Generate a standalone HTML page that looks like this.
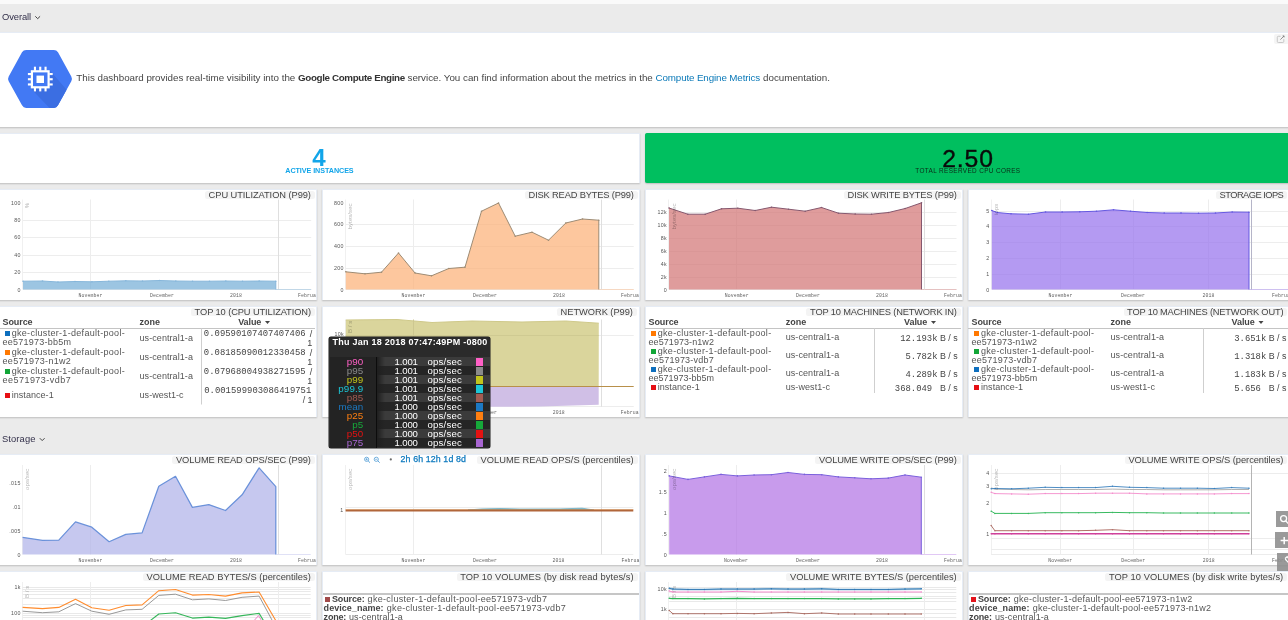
<!DOCTYPE html>
<html><head><meta charset="utf-8"><title>Google Compute Engine</title>
<style>
html,body{margin:0;padding:0;}
body{width:1288px;height:620px;overflow:hidden;background:#ebebeb;font-family:'Liberation Sans', sans-serif;position:relative;}
#root{position:absolute;left:0;top:0;width:1288px;height:620px;overflow:hidden;}
.p{position:absolute;background:#fff;border:1px solid #e6ecf5;border-bottom:0;box-shadow:0 1px 1.5px rgba(0,0,0,.19);box-sizing:border-box;}
svg{position:absolute;left:0;top:0;will-change:transform;}
.tl{position:absolute;left:0;top:0;width:1288px;height:620px;will-change:transform;}
</style></head><body><div id="root">
<div style="position:absolute;left:0px;top:0px;width:1288px;height:4px;background:#fafafa;"></div>
<div class="p" style="left:-2px;top:32px;width:1298px;height:95px;background:#fff;"></div>
<div style="position:absolute;left:1274px;top:34px;width:14px;height:10px;background:#f5f5f5;border-radius:2px 0 0 2px;"></div>
<div class="p" style="left:-2px;top:133px;width:642px;height:50px;background:#fff;"></div>
<div class="p" style="left:645px;top:133px;width:651px;height:50px;background:#00bf5f;border-color:#00bf5f;border-radius:2px;"></div>
<div class="p" style="left:-2px;top:189px;width:319px;height:111px;background:#fff;"></div>
<div class="p" style="left:322px;top:189px;width:318px;height:111px;background:#fff;"></div>
<div class="p" style="left:645px;top:189px;width:318px;height:111px;background:#fff;"></div>
<div class="p" style="left:968px;top:189px;width:328px;height:111px;background:#fff;"></div>
<div style="position:absolute;left:205px;top:191px;width:110px;height:8px;background:#f4f4f4;border-radius:2.5px;"></div>
<div style="position:absolute;left:525px;top:191px;width:113px;height:8px;background:#f4f4f4;border-radius:2.5px;"></div>
<div style="position:absolute;left:844px;top:191px;width:117px;height:8px;background:#f4f4f4;border-radius:2.5px;"></div>
<div style="position:absolute;left:1216px;top:191px;width:71px;height:8px;background:#f4f4f4;border-radius:2.5px;"></div>
<div class="p" style="left:-2px;top:306px;width:319px;height:111px;background:#fff;"></div>
<div class="p" style="left:322px;top:306px;width:318px;height:111px;background:#fff;"></div>
<div class="p" style="left:645px;top:306px;width:318px;height:111px;background:#fff;"></div>
<div class="p" style="left:968px;top:306px;width:328px;height:111px;background:#fff;"></div>
<div style="position:absolute;left:191px;top:308px;width:124px;height:8px;background:#f4f4f4;border-radius:2.5px;"></div>
<div style="position:absolute;left:557px;top:308px;width:80px;height:8px;background:#f4f4f4;border-radius:2.5px;"></div>
<div style="position:absolute;left:806px;top:308px;width:155px;height:8px;background:#f4f4f4;border-radius:2.5px;"></div>
<div style="position:absolute;left:1124px;top:308px;width:163px;height:8px;background:#f4f4f4;border-radius:2.5px;"></div>
<div style="position:absolute;left:5px;top:331px;width:5px;height:5px;background:#0e6fbe;"></div>
<div style="position:absolute;left:5px;top:350px;width:5px;height:5px;background:#ff7800;"></div>
<div style="position:absolute;left:5px;top:369px;width:5px;height:5px;background:#12a637;"></div>
<div style="position:absolute;left:5px;top:393px;width:5px;height:5px;background:#e60f14;"></div>
<div style="position:absolute;left:651px;top:331px;width:5px;height:5px;background:#ff7800;"></div>
<div style="position:absolute;left:651px;top:349px;width:5px;height:5px;background:#12a637;"></div>
<div style="position:absolute;left:651px;top:367px;width:5px;height:5px;background:#0e6fbe;"></div>
<div style="position:absolute;left:651px;top:385px;width:5px;height:5px;background:#e60f14;"></div>
<div style="position:absolute;left:974px;top:331px;width:5px;height:5px;background:#ff7800;"></div>
<div style="position:absolute;left:974px;top:349px;width:5px;height:5px;background:#12a637;"></div>
<div style="position:absolute;left:974px;top:367px;width:5px;height:5px;background:#0e6fbe;"></div>
<div style="position:absolute;left:974px;top:385px;width:5px;height:5px;background:#e60f14;"></div>
<div class="p" style="left:-2px;top:454px;width:319px;height:111px;background:#fff;"></div>
<div class="p" style="left:322px;top:454px;width:318px;height:111px;background:#fff;"></div>
<div class="p" style="left:645px;top:454px;width:318px;height:111px;background:#fff;"></div>
<div class="p" style="left:968px;top:454px;width:328px;height:111px;background:#fff;"></div>
<div style="position:absolute;left:172px;top:456px;width:143px;height:8px;background:#f4f4f4;border-radius:2.5px;"></div>
<div style="position:absolute;left:477px;top:456px;width:161px;height:8px;background:#f4f4f4;border-radius:2.5px;"></div>
<div style="position:absolute;left:815px;top:456px;width:146px;height:8px;background:#f4f4f4;border-radius:2.5px;"></div>
<div style="position:absolute;left:1125px;top:456px;width:162px;height:8px;background:#f4f4f4;border-radius:2.5px;"></div>
<div class="p" style="left:-2px;top:571px;width:319px;height:69px;background:#fff;"></div>
<div class="p" style="left:322px;top:571px;width:318px;height:69px;background:#fff;"></div>
<div class="p" style="left:645px;top:571px;width:318px;height:69px;background:#fff;"></div>
<div class="p" style="left:968px;top:571px;width:328px;height:69px;background:#fff;"></div>
<div style="position:absolute;left:143px;top:573px;width:172px;height:8px;background:#f4f4f4;border-radius:2.5px;"></div>
<div style="position:absolute;left:457px;top:573px;width:181px;height:8px;background:#f4f4f4;border-radius:2.5px;"></div>
<div style="position:absolute;left:786px;top:573px;width:175px;height:8px;background:#f4f4f4;border-radius:2.5px;"></div>
<div style="position:absolute;left:1105px;top:573px;width:182px;height:8px;background:#f4f4f4;border-radius:2.5px;"></div>
<div style="position:absolute;left:323px;top:593px;width:316px;height:2px;background:#c6c6c6;"></div>
<div style="position:absolute;left:325px;top:597px;width:5px;height:5px;background:#a24a4a;"></div>
<div style="position:absolute;left:969px;top:593px;width:326px;height:2px;background:#c6c6c6;"></div>
<div style="position:absolute;left:971px;top:597px;width:5px;height:5px;background:#e3141c;"></div>
<svg width="1288" height="620" viewBox="0 0 1288 620" shape-rendering="auto">
<path d="M35.3 16.3 l2.4 2.4 l2.4 -2.4" fill="none" stroke="#444" stroke-width="1"/>
<path d="M39.8 438.2 l2.4 2.4 l2.4 -2.4" fill="none" stroke="#444" stroke-width="1"/>
<path d="M1280.6 36.3 h-2.3 a1 1 0 0 0 -1 1 v4.2 a1 1 0 0 0 1 1 h4.5 a1 1 0 0 0 1 -1 v-2.4" fill="none" stroke="#bdbdbd" stroke-width="0.8"/><path d="M1280.4 39.6 L1284 36 M1282.6 35.9 h1.5 v1.5" fill="none" stroke="#707070" stroke-width="0.75"/>
<g>
<path d="M26.2 49.9 H53.8 Q56.6 49.9 58 52.3 L71.3 76.4 Q72.6 78.8 71.3 81.2 L58 105.3 Q56.6 107.9 53.8 107.9 H26.2 Q23.4 107.9 22 105.3 L8.7 81.2 Q7.4 78.8 8.7 76.4 L22 52.3 Q23.4 49.9 26.2 49.9 Z" fill="#4279f4"/>
<path d="M49.7 70.2 L66.6 89.7 L58 105.3 Q56.6 107.9 53.8 107.9 H49.6 L30.8 88.4 Z" fill="#3b6ee2"/>
<g fill="#fff">
<rect x="30.8" y="70.2" width="18.9" height="18.2"/>
<rect x="33.9" y="66.7" width="2.1" height="4"/><rect x="39.2" y="66.7" width="2.1" height="4"/><rect x="44.5" y="66.7" width="2.1" height="4"/>
<rect x="33.9" y="88" width="2.1" height="3.4"/><rect x="39.2" y="88" width="2.1" height="3.4"/><rect x="44.5" y="88" width="2.1" height="3.4"/>
<rect x="27.9" y="73" width="3.4" height="2.1"/><rect x="27.9" y="78.2" width="3.4" height="2.1"/><rect x="27.9" y="83.4" width="3.4" height="2.1"/>
<rect x="49.3" y="73" width="3.4" height="2.1"/><rect x="49.3" y="78.2" width="3.4" height="2.1"/><rect x="49.3" y="83.4" width="3.4" height="2.1"/>
</g>
<rect x="33" y="72.4" width="14.5" height="13.8" fill="#4279f4"/>
<rect x="36.5" y="75.6" width="7.5" height="7.4" fill="#fff"/>
</g>
<line x1="22.5" x2="22.5" y1="199.5" y2="289.5" stroke="#f0f0f0" stroke-width="1"/>
<line x1="23" x2="311.2" y1="220.5" y2="220.5" stroke="#ededed" stroke-width="1"/>
<line x1="23" x2="311.2" y1="237.5" y2="237.5" stroke="#ededed" stroke-width="1"/>
<line x1="23" x2="311.2" y1="255.5" y2="255.5" stroke="#ededed" stroke-width="1"/>
<line x1="23" x2="311.2" y1="272.5" y2="272.5" stroke="#ededed" stroke-width="1"/>
<line x1="23" x2="311.2" y1="289.5" y2="289.5" stroke="#ededed" stroke-width="1"/>
<line x1="90.5" x2="90.5" y1="199.5" y2="289.5" stroke="#ededed" stroke-width="1"/>
<line x1="278.5" x2="278.5" y1="199.5" y2="289.5" stroke="#dfdfdf" stroke-width="1"/>
<path d="M23.0 281.2 L42.5 281.0 L58.0 282.0 L75.0 281.5 L92.0 281.8 L108.8 281.2 L125.8 280.8 L142.5 281.0 L159.5 280.5 L175.8 281.0 L192.5 281.2 L209.5 281.2 L225.8 281.0 L242.5 281.2 L259.2 281.0 L275.8 281.2 L275.8 289.5 L23.0 289.5 Z" fill="rgba(118,174,215,0.72)"/>
<path d="M23.0 281.2 L42.5 281.0 L58.0 282.0 L75.0 281.5 L92.0 281.8 L108.8 281.2 L125.8 280.8 L142.5 281.0 L159.5 280.5 L175.8 281.0 L192.5 281.2 L209.5 281.2 L225.8 281.0 L242.5 281.2 L259.2 281.0 L275.8 281.2 L275.8 289.5" fill="none" stroke="#86b6da" stroke-width="1" stroke-linejoin="round"/>
<path d="M275.8 289.5 H311.2" fill="none" stroke="rgba(156,197,226,1.0)" stroke-width="1" opacity="0.55"/>
<circle cx="23.0" cy="281.2" r="0.8" fill="#86b6da"/>
<circle cx="42.5" cy="281.0" r="0.8" fill="#86b6da"/>
<circle cx="58.0" cy="282.0" r="0.8" fill="#86b6da"/>
<circle cx="75.0" cy="281.5" r="0.8" fill="#86b6da"/>
<circle cx="92.0" cy="281.8" r="0.8" fill="#86b6da"/>
<circle cx="108.8" cy="281.2" r="0.8" fill="#86b6da"/>
<circle cx="125.8" cy="280.8" r="0.8" fill="#86b6da"/>
<circle cx="142.5" cy="281.0" r="0.8" fill="#86b6da"/>
<circle cx="159.5" cy="280.5" r="0.8" fill="#86b6da"/>
<circle cx="175.8" cy="281.0" r="0.8" fill="#86b6da"/>
<circle cx="192.5" cy="281.2" r="0.8" fill="#86b6da"/>
<circle cx="209.5" cy="281.2" r="0.8" fill="#86b6da"/>
<circle cx="225.8" cy="281.0" r="0.8" fill="#86b6da"/>
<circle cx="242.5" cy="281.2" r="0.8" fill="#86b6da"/>
<circle cx="259.2" cy="281.0" r="0.8" fill="#86b6da"/>
<circle cx="275.8" cy="281.2" r="0.8" fill="#86b6da"/>
<text transform="translate(29 208.3) rotate(-90)" font-family="Liberation Sans, sans-serif" font-size="6.2" fill="#000" opacity="0.3">%</text>
<line x1="345.5" x2="345.5" y1="199.5" y2="289.5" stroke="#f0f0f0" stroke-width="1"/>
<line x1="345.7" x2="633.7" y1="224.5" y2="224.5" stroke="#ededed" stroke-width="1"/>
<line x1="345.7" x2="633.7" y1="246.5" y2="246.5" stroke="#ededed" stroke-width="1"/>
<line x1="345.7" x2="633.7" y1="268.5" y2="268.5" stroke="#ededed" stroke-width="1"/>
<line x1="345.7" x2="633.7" y1="289.5" y2="289.5" stroke="#ededed" stroke-width="1"/>
<line x1="413.5" x2="413.5" y1="199.5" y2="289.5" stroke="#ededed" stroke-width="1"/>
<path d="M345.8 271.8 L365.0 273.8 L381.5 272.2 L398.5 253.0 L415.0 273.0 L431.5 275.8 L448.8 268.5 L465.0 267.2 L481.5 211.2 L498.5 203.0 L515.2 236.2 L532.0 232.2 L548.5 240.2 L565.8 223.0 L582.5 219.0 L598.8 220.2 L598.8 289.5 L345.8 289.5 Z" fill="rgba(252,177,120,0.72)"/>
<path d="M345.8 271.8 L365.0 273.8 L381.5 272.2 L398.5 253.0 L415.0 273.0 L431.5 275.8 L448.8 268.5 L465.0 267.2 L481.5 211.2 L498.5 203.0 L515.2 236.2 L532.0 232.2 L548.5 240.2 L565.8 223.0 L582.5 219.0 L598.8 220.2 L598.8 289.5" fill="none" stroke="#9d8b74" stroke-width="1" stroke-linejoin="round"/>
<path d="M598.8 289.5 H633.7" fill="none" stroke="rgba(253,199,158,1.0)" stroke-width="1" opacity="0.55"/>
<circle cx="345.8" cy="271.8" r="0.8" fill="#9d8b74"/>
<circle cx="365.0" cy="273.8" r="0.8" fill="#9d8b74"/>
<circle cx="381.5" cy="272.2" r="0.8" fill="#9d8b74"/>
<circle cx="398.5" cy="253.0" r="0.8" fill="#9d8b74"/>
<circle cx="415.0" cy="273.0" r="0.8" fill="#9d8b74"/>
<circle cx="431.5" cy="275.8" r="0.8" fill="#9d8b74"/>
<circle cx="448.8" cy="268.5" r="0.8" fill="#9d8b74"/>
<circle cx="465.0" cy="267.2" r="0.8" fill="#9d8b74"/>
<circle cx="481.5" cy="211.2" r="0.8" fill="#9d8b74"/>
<circle cx="498.5" cy="203.0" r="0.8" fill="#9d8b74"/>
<circle cx="515.2" cy="236.2" r="0.8" fill="#9d8b74"/>
<circle cx="532.0" cy="232.2" r="0.8" fill="#9d8b74"/>
<circle cx="548.5" cy="240.2" r="0.8" fill="#9d8b74"/>
<circle cx="565.8" cy="223.0" r="0.8" fill="#9d8b74"/>
<circle cx="582.5" cy="219.0" r="0.8" fill="#9d8b74"/>
<circle cx="598.8" cy="220.2" r="0.8" fill="#9d8b74"/>
<line x1="601.5" x2="601.5" y1="199.5" y2="289.5" stroke="#dfdfdf" stroke-width="1"/>
<text transform="translate(352 229.5) rotate(-90)" font-family="Liberation Sans, sans-serif" font-size="6.2" fill="#000" opacity="0.3">bytes/sec</text>
<line x1="668.5" x2="668.5" y1="199.5" y2="289.5" stroke="#f0f0f0" stroke-width="1"/>
<line x1="669" x2="956.5" y1="212.5" y2="212.5" stroke="#ededed" stroke-width="1"/>
<line x1="669" x2="956.5" y1="225.5" y2="225.5" stroke="#ededed" stroke-width="1"/>
<line x1="669" x2="956.5" y1="238.5" y2="238.5" stroke="#ededed" stroke-width="1"/>
<line x1="669" x2="956.5" y1="251.5" y2="251.5" stroke="#ededed" stroke-width="1"/>
<line x1="669" x2="956.5" y1="264.5" y2="264.5" stroke="#ededed" stroke-width="1"/>
<line x1="669" x2="956.5" y1="277.5" y2="277.5" stroke="#ededed" stroke-width="1"/>
<line x1="669" x2="956.5" y1="289.5" y2="289.5" stroke="#ededed" stroke-width="1"/>
<line x1="736.5" x2="736.5" y1="199.5" y2="289.5" stroke="#ededed" stroke-width="1"/>
<path d="M669.0 208.0 L687.8 214.2 L705.2 214.2 L721.5 208.8 L737.8 208.2 L755.2 210.5 L771.5 207.2 L788.5 209.2 L805.2 211.2 L821.5 207.5 L838.5 213.2 L855.2 214.0 L871.5 214.2 L888.5 212.5 L905.2 208.5 L921.5 202.8 L921.5 289.5 L669.0 289.5 Z" fill="rgba(211,118,118,0.72)"/>
<path d="M669.0 208.0 L687.8 214.2 L705.2 214.2 L721.5 208.8 L737.8 208.2 L755.2 210.5 L771.5 207.2 L788.5 209.2 L805.2 211.2 L821.5 207.5 L838.5 213.2 L855.2 214.0 L871.5 214.2 L888.5 212.5 L905.2 208.5 L921.5 202.8 L921.5 289.5" fill="none" stroke="#85586e" stroke-width="1" stroke-linejoin="round"/>
<path d="M921.5 289.5 H956.5" fill="none" stroke="rgba(223,156,156,1.0)" stroke-width="1" opacity="0.55"/>
<circle cx="669.0" cy="208.0" r="0.8" fill="#85586e"/>
<circle cx="687.8" cy="214.2" r="0.8" fill="#85586e"/>
<circle cx="705.2" cy="214.2" r="0.8" fill="#85586e"/>
<circle cx="721.5" cy="208.8" r="0.8" fill="#85586e"/>
<circle cx="737.8" cy="208.2" r="0.8" fill="#85586e"/>
<circle cx="755.2" cy="210.5" r="0.8" fill="#85586e"/>
<circle cx="771.5" cy="207.2" r="0.8" fill="#85586e"/>
<circle cx="788.5" cy="209.2" r="0.8" fill="#85586e"/>
<circle cx="805.2" cy="211.2" r="0.8" fill="#85586e"/>
<circle cx="821.5" cy="207.5" r="0.8" fill="#85586e"/>
<circle cx="838.5" cy="213.2" r="0.8" fill="#85586e"/>
<circle cx="855.2" cy="214.0" r="0.8" fill="#85586e"/>
<circle cx="871.5" cy="214.2" r="0.8" fill="#85586e"/>
<circle cx="888.5" cy="212.5" r="0.8" fill="#85586e"/>
<circle cx="905.2" cy="208.5" r="0.8" fill="#85586e"/>
<circle cx="921.5" cy="202.8" r="0.8" fill="#85586e"/>
<line x1="924.5" x2="924.5" y1="199.5" y2="289.5" stroke="#dfdfdf" stroke-width="1"/>
<text transform="translate(676 229.5) rotate(-90)" font-family="Liberation Sans, sans-serif" font-size="6.2" fill="#000" opacity="0.3">bytes/sec</text>
<line x1="991.5" x2="991.5" y1="199.5" y2="289.5" stroke="#f0f0f0" stroke-width="1"/>
<line x1="991.7" x2="1288" y1="211.5" y2="211.5" stroke="#ededed" stroke-width="1"/>
<line x1="991.7" x2="1288" y1="226.5" y2="226.5" stroke="#ededed" stroke-width="1"/>
<line x1="991.7" x2="1288" y1="242.5" y2="242.5" stroke="#ededed" stroke-width="1"/>
<line x1="991.7" x2="1288" y1="258.5" y2="258.5" stroke="#ededed" stroke-width="1"/>
<line x1="991.7" x2="1288" y1="274.5" y2="274.5" stroke="#ededed" stroke-width="1"/>
<line x1="991.7" x2="1288" y1="289.5" y2="289.5" stroke="#ededed" stroke-width="1"/>
<line x1="1060.5" x2="1060.5" y1="199.5" y2="289.5" stroke="#ededed" stroke-width="1"/>
<line x1="1133.5" x2="1133.5" y1="199.5" y2="289.5" stroke="#ededed" stroke-width="1"/>
<line x1="1208.5" x2="1208.5" y1="199.5" y2="289.5" stroke="#ededed" stroke-width="1"/>
<path d="M991.8 210.5 L997.2 212.5 L1011.0 213.8 L1028.5 214.2 L1045.5 212.0 L1062.2 212.0 L1079.8 211.8 L1096.5 211.2 L1113.5 209.8 L1130.5 211.2 L1147.2 212.5 L1164.2 213.0 L1181.0 213.0 L1198.5 213.2 L1215.5 213.0 L1232.2 212.0 L1249.0 212.2 L1249.0 289.5 L991.8 289.5 Z" fill="rgba(151,115,237,0.72)"/>
<path d="M991.8 210.5 L997.2 212.5 L1011.0 213.8 L1028.5 214.2 L1045.5 212.0 L1062.2 212.0 L1079.8 211.8 L1096.5 211.2 L1113.5 209.8 L1130.5 211.2 L1147.2 212.5 L1164.2 213.0 L1181.0 213.0 L1198.5 213.2 L1215.5 213.0 L1232.2 212.0 L1249.0 212.2 L1249.0 289.5" fill="none" stroke="#6558e0" stroke-width="1" stroke-linejoin="round"/>
<path d="M1249.0 289.5 H1288" fill="none" stroke="rgba(180,154,242,1.0)" stroke-width="1" opacity="0.55"/>
<circle cx="991.8" cy="210.5" r="0.8" fill="#6558e0"/>
<circle cx="997.2" cy="212.5" r="0.8" fill="#6558e0"/>
<circle cx="1011.0" cy="213.8" r="0.8" fill="#6558e0"/>
<circle cx="1028.5" cy="214.2" r="0.8" fill="#6558e0"/>
<circle cx="1045.5" cy="212.0" r="0.8" fill="#6558e0"/>
<circle cx="1062.2" cy="212.0" r="0.8" fill="#6558e0"/>
<circle cx="1079.8" cy="211.8" r="0.8" fill="#6558e0"/>
<circle cx="1096.5" cy="211.2" r="0.8" fill="#6558e0"/>
<circle cx="1113.5" cy="209.8" r="0.8" fill="#6558e0"/>
<circle cx="1130.5" cy="211.2" r="0.8" fill="#6558e0"/>
<circle cx="1147.2" cy="212.5" r="0.8" fill="#6558e0"/>
<circle cx="1164.2" cy="213.0" r="0.8" fill="#6558e0"/>
<circle cx="1181.0" cy="213.0" r="0.8" fill="#6558e0"/>
<circle cx="1198.5" cy="213.2" r="0.8" fill="#6558e0"/>
<circle cx="1215.5" cy="213.0" r="0.8" fill="#6558e0"/>
<circle cx="1232.2" cy="212.0" r="0.8" fill="#6558e0"/>
<circle cx="1249.0" cy="212.2" r="0.8" fill="#6558e0"/>
<line x1="1251.5" x2="1251.5" y1="199.5" y2="289.5" stroke="#b5b5c8" stroke-width="1"/>
<text transform="translate(998 215) rotate(-90)" font-family="Liberation Sans, sans-serif" font-size="6.2" fill="#000" opacity="0.3">iops</text>
<path d="M265 321 h5 l-2.5 3 z" fill="#444"/>
<line x1="-2" x2="315" y1="328.5" y2="328.5" stroke="#c4c4c4" stroke-width="1"/>
<line x1="201.5" x2="201.5" y1="328.3" y2="404.5" stroke="#cfcfcf" stroke-width="1"/>
<path d="M931 321 h5 l-2.5 3 z" fill="#444"/>
<line x1="645" x2="961" y1="328.5" y2="328.5" stroke="#c4c4c4" stroke-width="1"/>
<line x1="874.5" x2="874.5" y1="328.3" y2="393" stroke="#cfcfcf" stroke-width="1"/>
<path d="M1258.5 321 h5 l-2.5 3 z" fill="#444"/>
<line x1="968" x2="1294" y1="328.5" y2="328.5" stroke="#c4c4c4" stroke-width="1"/>
<line x1="1203.5" x2="1203.5" y1="328.3" y2="393" stroke="#cfcfcf" stroke-width="1"/>
<line x1="345.5" x2="345.5" y1="319.5" y2="406.7" stroke="#f0f0f0" stroke-width="1"/>
<line x1="345.7" x2="633.7" y1="335.5" y2="335.5" stroke="#ededed" stroke-width="1"/>
<line x1="345.7" x2="633.7" y1="406.5" y2="406.5" stroke="#ededed" stroke-width="1"/>
<path d="M345.8 320.0 L397.0 319.5 L432.0 322.5 L472.0 321.0 L522.0 322.0 L565.8 321.0 L598.8 323.2 L598.7 386.2 L345.7 386.2 Z" fill="#dad59c"/>
<path d="M345.8 320.0 L397.0 319.5 L432.0 322.5 L472.0 321.0 L522.0 322.0 L565.8 321.0 L598.8 323.2" fill="none" stroke="#cfc98a" stroke-width="1"/>
<path d="M345.7 386.2 H598.7 V404.8 L540 406.6 L345.7 406.8 Z" fill="#d0bfe6"/>
<line x1="345.7" x2="598.7" y1="335.5" y2="335.5" stroke="#cfca92" stroke-width="1"/>
<line x1="413.5" x2="413.5" y1="319.5" y2="406.5" stroke="#cdc790" stroke-width="1"/>
<line x1="601.5" x2="601.5" y1="319.5" y2="406.7" stroke="#dfdfdf" stroke-width="1"/>
<path d="M345.7 386.5 H633.7" fill="none" stroke="#b8904a" stroke-width="1"/>
<text transform="translate(351.5 333) rotate(-90)" font-family="Liberation Sans, sans-serif" font-size="6.2" fill="#000" opacity="0.3">B / s</text>
<line x1="22.5" x2="22.5" y1="465" y2="554.5" stroke="#f0f0f0" stroke-width="1"/>
<line x1="90.5" x2="90.5" y1="465" y2="554.5" stroke="#ededed" stroke-width="1"/>
<path d="M22.6 537.3 L42.5 540.4 L58.8 540.1 L75.5 521.9 L91.8 527.2 L109.1 541.7 L125.8 534.4 L142.1 532.9 L158.8 486.3 L175.5 476.3 L192.4 507.4 L208.8 504.6 L225.5 510.5 L242.1 494.8 L259.1 467.8 L275.8 486.6 L275.8 554.5 L22.6 554.5 Z" fill="rgba(176,179,233,0.72)"/>
<path d="M22.6 537.3 L42.5 540.4 L58.8 540.1 L75.5 521.9 L91.8 527.2 L109.1 541.7 L125.8 534.4 L142.1 532.9 L158.8 486.3 L175.5 476.3 L192.4 507.4 L208.8 504.6 L225.5 510.5 L242.1 494.8 L259.1 467.8 L275.8 486.6 L275.8 554.5" fill="none" stroke="#6b92da" stroke-width="1.25" stroke-linejoin="round"/>
<path d="M275.8 554.5 H310.7" fill="none" stroke="rgba(198,200,239,1.0)" stroke-width="1" opacity="0.55"/>
<line x1="278.5" x2="278.5" y1="465" y2="554.5" stroke="#dfdfdf" stroke-width="1"/>
<text transform="translate(29 490) rotate(-90)" font-family="Liberation Sans, sans-serif" font-size="6.2" fill="#000" opacity="0.3">ops/sec</text>
<line x1="345.5" x2="345.5" y1="465" y2="554.5" stroke="#f0f0f0" stroke-width="1"/>
<line x1="345.6" x2="633.3" y1="507.5" y2="507.5" stroke="#ededed" stroke-width="1"/>
<line x1="345.6" x2="633.3" y1="554.5" y2="554.5" stroke="#ededed" stroke-width="1"/>
<line x1="413.5" x2="413.5" y1="465" y2="554.5" stroke="#ededed" stroke-width="1"/>
<line x1="601.5" x2="601.5" y1="465" y2="554.5" stroke="#dfdfdf" stroke-width="1"/>
<path d="M468 510 L482 508.9 L500 508.5 L520 509 L560 508.9 L582 508.2 L594 510 Z" fill="#6fb0c4" stroke="#6fb0c4" stroke-width="0.8"/>
<path d="M345.6 510.5 H633.3" fill="none" stroke="#b0653a" stroke-width="2"/>
<path d="M345.6 509.6 H633.3" fill="none" stroke="#d08a48" stroke-width="0.5"/>
<text transform="translate(352 490) rotate(-90)" font-family="Liberation Sans, sans-serif" font-size="6.2" fill="#000" opacity="0.3">ops/sec</text>
<circle cx="366.6" cy="459.3" r="2.1" fill="none" stroke="#3a8fd0" stroke-width="0.7"/><path d="M368.1 460.8 l1.9 1.9" stroke="#3a8fd0" stroke-width="0.8"/><path d="M365.5 459.3 h2.2" stroke="#3a8fd0" stroke-width="0.6"/><path d="M366.6 458.2 v2.2" stroke="#3a8fd0" stroke-width="0.6"/>
<circle cx="376.3" cy="459.3" r="2.1" fill="none" stroke="#3a8fd0" stroke-width="0.7"/><path d="M377.8 460.8 l1.9 1.9" stroke="#3a8fd0" stroke-width="0.8"/><path d="M375.2 459.3 h2.2" stroke="#3a8fd0" stroke-width="0.6"/>
<circle cx="390.8" cy="459.4" r="1.1" fill="#6a6a6a"/>
<line x1="668.5" x2="668.5" y1="465" y2="554.5" stroke="#f0f0f0" stroke-width="1"/>
<line x1="736.5" x2="736.5" y1="465" y2="554.5" stroke="#ededed" stroke-width="1"/>
<path d="M669.2 475.9 L688.0 479.4 L704.4 476.9 L721.0 474.4 L737.4 475.9 L754.1 475.0 L771.4 474.7 L788.0 472.5 L804.4 474.4 L821.7 474.7 L838.3 476.9 L854.7 477.8 L871.0 478.8 L888.3 478.1 L905.0 475.0 L921.3 477.2 L921.3 554.5 L669.2 554.5 Z" fill="rgba(179,116,229,0.72)"/>
<path d="M669.2 475.9 L688.0 479.4 L704.4 476.9 L721.0 474.4 L737.4 475.9 L754.1 475.0 L771.4 474.7 L788.0 472.5 L804.4 474.4 L821.7 474.7 L838.3 476.9 L854.7 477.8 L871.0 478.8 L888.3 478.1 L905.0 475.0 L921.3 477.2 L921.3 554.5" fill="none" stroke="#7a60dc" stroke-width="1" stroke-linejoin="round"/>
<path d="M921.3 554.5 H956.3" fill="none" stroke="rgba(200,155,236,1.0)" stroke-width="1" opacity="0.55"/>
<circle cx="669.2" cy="475.9" r="0.8" fill="#7a60dc"/>
<circle cx="688.0" cy="479.4" r="0.8" fill="#7a60dc"/>
<circle cx="704.4" cy="476.9" r="0.8" fill="#7a60dc"/>
<circle cx="721.0" cy="474.4" r="0.8" fill="#7a60dc"/>
<circle cx="737.4" cy="475.9" r="0.8" fill="#7a60dc"/>
<circle cx="754.1" cy="475.0" r="0.8" fill="#7a60dc"/>
<circle cx="771.4" cy="474.7" r="0.8" fill="#7a60dc"/>
<circle cx="788.0" cy="472.5" r="0.8" fill="#7a60dc"/>
<circle cx="804.4" cy="474.4" r="0.8" fill="#7a60dc"/>
<circle cx="821.7" cy="474.7" r="0.8" fill="#7a60dc"/>
<circle cx="838.3" cy="476.9" r="0.8" fill="#7a60dc"/>
<circle cx="854.7" cy="477.8" r="0.8" fill="#7a60dc"/>
<circle cx="871.0" cy="478.8" r="0.8" fill="#7a60dc"/>
<circle cx="888.3" cy="478.1" r="0.8" fill="#7a60dc"/>
<circle cx="905.0" cy="475.0" r="0.8" fill="#7a60dc"/>
<circle cx="921.3" cy="477.2" r="0.8" fill="#7a60dc"/>
<line x1="924.5" x2="924.5" y1="465" y2="554.5" stroke="#dfdfdf" stroke-width="1"/>
<text transform="translate(676 490) rotate(-90)" font-family="Liberation Sans, sans-serif" font-size="6.2" fill="#000" opacity="0.3">ops/sec</text>
<line x1="991.5" x2="991.5" y1="465" y2="554.5" stroke="#f0f0f0" stroke-width="1"/>
<line x1="991.2" x2="1288" y1="473.5" y2="473.5" stroke="#ececec" stroke-width="1"/>
<line x1="991.2" x2="1288" y1="538.5" y2="538.5" stroke="#ececec" stroke-width="1"/>
<line x1="991.2" x2="1288" y1="549.5" y2="549.5" stroke="#ececec" stroke-width="1"/>
<line x1="991.2" x2="1288" y1="554.5" y2="554.5" stroke="#ececec" stroke-width="1"/>
<line x1="1060.5" x2="1060.5" y1="465" y2="554.5" stroke="#ededed" stroke-width="1"/>
<line x1="1133.5" x2="1133.5" y1="465" y2="554.5" stroke="#ededed" stroke-width="1"/>
<line x1="1208.5" x2="1208.5" y1="465" y2="554.5" stroke="#ededed" stroke-width="1"/>
<path d="M991.2 487.9 L994.9 489.1 L1011.6 489.5 L1028.3 489.8 L1045.2 489.5 L1061.9 489.5 L1078.6 489.5 L1095.6 489.5 L1112.5 489.1 L1129.5 489.5 L1146.8 489.5 L1163.5 489.8 L1180.5 489.8 L1197.4 489.8 L1214.4 489.8 L1231.7 489.5 L1249.0 489.5" fill="none" stroke="#9a9a9a" stroke-width="0.8" stroke-linejoin="round" opacity="1"/>
<path d="M991.2 488.8 L994.9 488.5 L1011.6 488.8 L1028.3 488.2 L1045.2 487.3 L1061.9 487.6 L1078.6 487.6 L1095.6 487.6 L1112.5 486.3 L1129.5 487.3 L1146.8 487.6 L1163.5 488.2 L1180.5 488.2 L1197.4 488.2 L1214.4 488.5 L1231.7 487.6 L1249.0 488.2" fill="none" stroke="#3a80bd" stroke-width="0.9" stroke-linejoin="round" opacity="1"/>
<circle cx="991.2" cy="488.8" r="0.75" fill="#3a80bd"/>
<circle cx="994.9" cy="488.5" r="0.75" fill="#3a80bd"/>
<circle cx="1011.6" cy="488.8" r="0.75" fill="#3a80bd"/>
<circle cx="1028.3" cy="488.2" r="0.75" fill="#3a80bd"/>
<circle cx="1045.2" cy="487.3" r="0.75" fill="#3a80bd"/>
<circle cx="1061.9" cy="487.6" r="0.75" fill="#3a80bd"/>
<circle cx="1078.6" cy="487.6" r="0.75" fill="#3a80bd"/>
<circle cx="1095.6" cy="487.6" r="0.75" fill="#3a80bd"/>
<circle cx="1112.5" cy="486.3" r="0.75" fill="#3a80bd"/>
<circle cx="1129.5" cy="487.3" r="0.75" fill="#3a80bd"/>
<circle cx="1146.8" cy="487.6" r="0.75" fill="#3a80bd"/>
<circle cx="1163.5" cy="488.2" r="0.75" fill="#3a80bd"/>
<circle cx="1180.5" cy="488.2" r="0.75" fill="#3a80bd"/>
<circle cx="1197.4" cy="488.2" r="0.75" fill="#3a80bd"/>
<circle cx="1214.4" cy="488.5" r="0.75" fill="#3a80bd"/>
<circle cx="1231.7" cy="487.6" r="0.75" fill="#3a80bd"/>
<circle cx="1249.0" cy="488.2" r="0.75" fill="#3a80bd"/>
<path d="M991.2 492.3 L994.9 493.6 L1011.6 493.9 L1028.3 494.2 L1045.2 493.6 L1061.9 493.6 L1078.6 493.6 L1095.6 493.2 L1112.5 493.2 L1129.5 493.2 L1146.8 493.9 L1163.5 493.9 L1180.5 493.9 L1197.4 493.9 L1214.4 493.9 L1231.7 493.6 L1249.0 493.6" fill="none" stroke="#f48ccc" stroke-width="0.9" stroke-linejoin="round" opacity="1"/>
<circle cx="991.2" cy="492.3" r="0.75" fill="#f48ccc"/>
<circle cx="994.9" cy="493.6" r="0.75" fill="#f48ccc"/>
<circle cx="1011.6" cy="493.9" r="0.75" fill="#f48ccc"/>
<circle cx="1028.3" cy="494.2" r="0.75" fill="#f48ccc"/>
<circle cx="1045.2" cy="493.6" r="0.75" fill="#f48ccc"/>
<circle cx="1061.9" cy="493.6" r="0.75" fill="#f48ccc"/>
<circle cx="1078.6" cy="493.6" r="0.75" fill="#f48ccc"/>
<circle cx="1095.6" cy="493.2" r="0.75" fill="#f48ccc"/>
<circle cx="1112.5" cy="493.2" r="0.75" fill="#f48ccc"/>
<circle cx="1129.5" cy="493.2" r="0.75" fill="#f48ccc"/>
<circle cx="1146.8" cy="493.9" r="0.75" fill="#f48ccc"/>
<circle cx="1163.5" cy="493.9" r="0.75" fill="#f48ccc"/>
<circle cx="1180.5" cy="493.9" r="0.75" fill="#f48ccc"/>
<circle cx="1197.4" cy="493.9" r="0.75" fill="#f48ccc"/>
<circle cx="1214.4" cy="493.9" r="0.75" fill="#f48ccc"/>
<circle cx="1231.7" cy="493.6" r="0.75" fill="#f48ccc"/>
<circle cx="1249.0" cy="493.6" r="0.75" fill="#f48ccc"/>
<path d="M991.2 511.2 L994.9 513.4 L1011.6 513.4 L1028.3 513.4 L1045.2 512.7 L1061.9 512.7 L1078.6 512.7 L1095.6 512.7 L1112.5 512.4 L1129.5 512.7 L1146.8 512.7 L1163.5 513.0 L1180.5 513.0 L1197.4 513.0 L1214.4 513.0 L1231.7 513.0 L1249.0 513.0" fill="none" stroke="#38ba60" stroke-width="1.0" stroke-linejoin="round" opacity="1"/>
<circle cx="991.2" cy="511.2" r="0.75" fill="#38ba60"/>
<circle cx="994.9" cy="513.4" r="0.75" fill="#38ba60"/>
<circle cx="1011.6" cy="513.4" r="0.75" fill="#38ba60"/>
<circle cx="1028.3" cy="513.4" r="0.75" fill="#38ba60"/>
<circle cx="1045.2" cy="512.7" r="0.75" fill="#38ba60"/>
<circle cx="1061.9" cy="512.7" r="0.75" fill="#38ba60"/>
<circle cx="1078.6" cy="512.7" r="0.75" fill="#38ba60"/>
<circle cx="1095.6" cy="512.7" r="0.75" fill="#38ba60"/>
<circle cx="1112.5" cy="512.4" r="0.75" fill="#38ba60"/>
<circle cx="1129.5" cy="512.7" r="0.75" fill="#38ba60"/>
<circle cx="1146.8" cy="512.7" r="0.75" fill="#38ba60"/>
<circle cx="1163.5" cy="513.0" r="0.75" fill="#38ba60"/>
<circle cx="1180.5" cy="513.0" r="0.75" fill="#38ba60"/>
<circle cx="1197.4" cy="513.0" r="0.75" fill="#38ba60"/>
<circle cx="1214.4" cy="513.0" r="0.75" fill="#38ba60"/>
<circle cx="1231.7" cy="513.0" r="0.75" fill="#38ba60"/>
<circle cx="1249.0" cy="513.0" r="0.75" fill="#38ba60"/>
<path d="M991.2 525.6 L994.9 530.7 L1011.6 530.7 L1028.3 530.7 L1045.2 530.7 L1061.9 530.7 L1078.6 530.7 L1095.6 530.3 L1112.5 529.7 L1129.5 530.7 L1146.8 530.7 L1163.5 530.7 L1180.5 530.7 L1197.4 530.7 L1214.4 530.7 L1231.7 530.7 L1249.0 530.7" fill="none" stroke="#b07068" stroke-width="1" stroke-linejoin="round" opacity="1"/>
<circle cx="991.2" cy="525.6" r="0.75" fill="#b07068"/>
<circle cx="994.9" cy="530.7" r="0.75" fill="#b07068"/>
<circle cx="1011.6" cy="530.7" r="0.75" fill="#b07068"/>
<circle cx="1028.3" cy="530.7" r="0.75" fill="#b07068"/>
<circle cx="1045.2" cy="530.7" r="0.75" fill="#b07068"/>
<circle cx="1061.9" cy="530.7" r="0.75" fill="#b07068"/>
<circle cx="1078.6" cy="530.7" r="0.75" fill="#b07068"/>
<circle cx="1095.6" cy="530.3" r="0.75" fill="#b07068"/>
<circle cx="1112.5" cy="529.7" r="0.75" fill="#b07068"/>
<circle cx="1129.5" cy="530.7" r="0.75" fill="#b07068"/>
<circle cx="1146.8" cy="530.7" r="0.75" fill="#b07068"/>
<circle cx="1163.5" cy="530.7" r="0.75" fill="#b07068"/>
<circle cx="1180.5" cy="530.7" r="0.75" fill="#b07068"/>
<circle cx="1197.4" cy="530.7" r="0.75" fill="#b07068"/>
<circle cx="1214.4" cy="530.7" r="0.75" fill="#b07068"/>
<circle cx="1231.7" cy="530.7" r="0.75" fill="#b07068"/>
<circle cx="1249.0" cy="530.7" r="0.75" fill="#b07068"/>
<path d="M991.2 533.8 L994.9 533.8 L1011.6 533.8 L1028.3 533.8 L1045.2 533.8 L1061.9 533.8 L1078.6 533.8 L1095.6 533.8 L1112.5 533.8 L1129.5 533.8 L1146.8 533.8 L1163.5 533.8 L1180.5 533.8 L1197.4 533.8 L1214.4 533.8 L1231.7 533.8 L1249.0 533.8" fill="none" stroke="#d0409a" stroke-width="1.6" stroke-linejoin="round" opacity="1"/>
<circle cx="991.2" cy="533.8" r="0.75" fill="#d0409a"/>
<circle cx="994.9" cy="533.8" r="0.75" fill="#d0409a"/>
<circle cx="1011.6" cy="533.8" r="0.75" fill="#d0409a"/>
<circle cx="1028.3" cy="533.8" r="0.75" fill="#d0409a"/>
<circle cx="1045.2" cy="533.8" r="0.75" fill="#d0409a"/>
<circle cx="1061.9" cy="533.8" r="0.75" fill="#d0409a"/>
<circle cx="1078.6" cy="533.8" r="0.75" fill="#d0409a"/>
<circle cx="1095.6" cy="533.8" r="0.75" fill="#d0409a"/>
<circle cx="1112.5" cy="533.8" r="0.75" fill="#d0409a"/>
<circle cx="1129.5" cy="533.8" r="0.75" fill="#d0409a"/>
<circle cx="1146.8" cy="533.8" r="0.75" fill="#d0409a"/>
<circle cx="1163.5" cy="533.8" r="0.75" fill="#d0409a"/>
<circle cx="1180.5" cy="533.8" r="0.75" fill="#d0409a"/>
<circle cx="1197.4" cy="533.8" r="0.75" fill="#d0409a"/>
<circle cx="1214.4" cy="533.8" r="0.75" fill="#d0409a"/>
<circle cx="1231.7" cy="533.8" r="0.75" fill="#d0409a"/>
<circle cx="1249.0" cy="533.8" r="0.75" fill="#d0409a"/>
<line x1="1251.5" x2="1251.5" y1="465" y2="554.5" stroke="#b4b4b4" stroke-width="1"/>
<text transform="translate(998 490) rotate(-90)" font-family="Liberation Sans, sans-serif" font-size="6.2" fill="#000" opacity="0.3">ops/sec</text>
<line x1="22.5" x2="22.5" y1="582" y2="620" stroke="#f0f0f0" stroke-width="1"/>
<line x1="22.6" x2="310.7" y1="587.5" y2="587.5" stroke="#e9e9e9" stroke-width="1"/>
<line x1="22.6" x2="310.7" y1="589.5" y2="589.5" stroke="#e9e9e9" stroke-width="1"/>
<line x1="22.6" x2="310.7" y1="591.5" y2="591.5" stroke="#e9e9e9" stroke-width="1"/>
<line x1="22.6" x2="310.7" y1="594.5" y2="594.5" stroke="#e9e9e9" stroke-width="1"/>
<line x1="22.6" x2="310.7" y1="598.5" y2="598.5" stroke="#e9e9e9" stroke-width="1"/>
<line x1="22.6" x2="310.7" y1="604.5" y2="604.5" stroke="#e9e9e9" stroke-width="1"/>
<line x1="22.6" x2="310.7" y1="613.5" y2="613.5" stroke="#e9e9e9" stroke-width="1"/>
<line x1="22.6" x2="310.7" y1="615.5" y2="615.5" stroke="#e9e9e9" stroke-width="1"/>
<line x1="22.6" x2="310.7" y1="617.5" y2="617.5" stroke="#e9e9e9" stroke-width="1"/>
<line x1="90.5" x2="90.5" y1="582" y2="620" stroke="#ededed" stroke-width="1"/>
<line x1="278.5" x2="278.5" y1="582" y2="620" stroke="#ededed" stroke-width="1"/>
<path d="M22.6 611.2 L42.5 612.7 L58.8 611.8 L75.5 603.6 L91.8 611.2 L109.1 614.3 L125.8 609.9 L142.1 609.3 L158.8 595.4 L175.5 594.2 L192.4 599.8 L208.8 598.9 L225.5 600.5 L242.1 597.3 L259.1 596.1 L272.3 620.6" fill="none" stroke="#8d8d8d" stroke-width="0.9" stroke-linejoin="round" opacity="1"/>
<path d="M22.6 607.4 L42.5 608.6 L58.8 607.4 L75.5 599.2 L91.8 607.7 L109.1 610.2 L125.8 605.5 L142.1 604.9 L158.8 590.7 L175.5 589.5 L192.4 595.1 L208.8 594.5 L225.5 596.1 L242.1 592.9 L259.1 592.0 L275.8 620.6" fill="none" stroke="#ff8c2e" stroke-width="1.1" stroke-linejoin="round" opacity="1"/>
<path d="M150.3 620.6 L158.8 614.0 L175.5 612.7 L192.4 618.1 L208.8 617.1 L225.5 618.4 L242.1 615.6 L259.1 613.4 L263.5 620.6" fill="none" stroke="#35b65a" stroke-width="1.1" stroke-linejoin="round" opacity="1"/>
<path d="M254.1 620.6 L258.5 615.6 L261.6 620.6" fill="none" stroke="#f070c8" stroke-width="0.9" stroke-linejoin="round" opacity="1"/>
<text transform="translate(29 598) rotate(-90)" font-family="Liberation Sans, sans-serif" font-size="6.2" fill="#000" opacity="0.3">B / s</text>
<line x1="668.5" x2="668.5" y1="582" y2="620" stroke="#f0f0f0" stroke-width="1"/>
<line x1="669.2" x2="956.3" y1="587.5" y2="587.5" stroke="#e9e9e9" stroke-width="1"/>
<line x1="669.2" x2="956.3" y1="589.5" y2="589.5" stroke="#e9e9e9" stroke-width="1"/>
<line x1="669.2" x2="956.3" y1="592.5" y2="592.5" stroke="#e9e9e9" stroke-width="1"/>
<line x1="669.2" x2="956.3" y1="596.5" y2="596.5" stroke="#e9e9e9" stroke-width="1"/>
<line x1="669.2" x2="956.3" y1="598.5" y2="598.5" stroke="#e9e9e9" stroke-width="1"/>
<line x1="669.2" x2="956.3" y1="601.5" y2="601.5" stroke="#e9e9e9" stroke-width="1"/>
<line x1="669.2" x2="956.3" y1="609.5" y2="609.5" stroke="#e9e9e9" stroke-width="1"/>
<line x1="669.2" x2="956.3" y1="613.5" y2="613.5" stroke="#e9e9e9" stroke-width="1"/>
<line x1="669.2" x2="956.3" y1="617.5" y2="617.5" stroke="#e9e9e9" stroke-width="1"/>
<line x1="736.5" x2="736.5" y1="582" y2="620" stroke="#ededed" stroke-width="1"/>
<line x1="924.5" x2="924.5" y1="582" y2="620" stroke="#ededed" stroke-width="1"/>
<path d="M669.2 588.2 L672.9 589.1 L688.0 589.5 L704.4 589.5 L721.0 589.1 L737.4 589.1 L754.1 589.1 L771.4 588.8 L788.0 589.1 L804.4 589.1 L821.7 588.8 L838.3 589.5 L854.7 589.5 L871.0 589.5 L888.3 589.5 L905.0 589.1 L921.3 588.8" fill="none" stroke="#9cc2dc" stroke-width="2.2" stroke-linejoin="round" opacity="0.8"/>
<path d="M669.2 588.2 L672.9 589.1 L688.0 589.5 L704.4 589.5 L721.0 589.1 L737.4 589.1 L754.1 589.1 L771.4 588.8 L788.0 589.1 L804.4 589.1 L821.7 588.8 L838.3 589.5 L854.7 589.5 L871.0 589.5 L888.3 589.5 L905.0 589.1 L921.3 588.8" fill="none" stroke="#2f78b4" stroke-width="0.9" stroke-linejoin="round" opacity="1"/>
<circle cx="669.2" cy="588.2" r="0.75" fill="#2f78b4"/>
<circle cx="672.9" cy="589.1" r="0.75" fill="#2f78b4"/>
<circle cx="688.0" cy="589.5" r="0.75" fill="#2f78b4"/>
<circle cx="704.4" cy="589.5" r="0.75" fill="#2f78b4"/>
<circle cx="721.0" cy="589.1" r="0.75" fill="#2f78b4"/>
<circle cx="737.4" cy="589.1" r="0.75" fill="#2f78b4"/>
<circle cx="754.1" cy="589.1" r="0.75" fill="#2f78b4"/>
<circle cx="771.4" cy="588.8" r="0.75" fill="#2f78b4"/>
<circle cx="788.0" cy="589.1" r="0.75" fill="#2f78b4"/>
<circle cx="804.4" cy="589.1" r="0.75" fill="#2f78b4"/>
<circle cx="821.7" cy="588.8" r="0.75" fill="#2f78b4"/>
<circle cx="838.3" cy="589.5" r="0.75" fill="#2f78b4"/>
<circle cx="854.7" cy="589.5" r="0.75" fill="#2f78b4"/>
<circle cx="871.0" cy="589.5" r="0.75" fill="#2f78b4"/>
<circle cx="888.3" cy="589.5" r="0.75" fill="#2f78b4"/>
<circle cx="905.0" cy="589.1" r="0.75" fill="#2f78b4"/>
<circle cx="921.3" cy="588.8" r="0.75" fill="#2f78b4"/>
<path d="M669.2 591.0 L672.9 592.0 L688.0 592.0 L704.4 592.0 L721.0 592.0 L737.4 591.3 L754.1 592.0 L771.4 592.0 L788.0 592.0 L804.4 592.0 L821.7 592.0 L838.3 592.0 L854.7 592.0 L871.0 592.0 L888.3 592.0 L905.0 592.0 L921.3 592.0" fill="none" stroke="#f48ccc" stroke-width="1" stroke-linejoin="round" opacity="1"/>
<circle cx="669.2" cy="591.0" r="0.75" fill="#f48ccc"/>
<circle cx="672.9" cy="592.0" r="0.75" fill="#f48ccc"/>
<circle cx="688.0" cy="592.0" r="0.75" fill="#f48ccc"/>
<circle cx="704.4" cy="592.0" r="0.75" fill="#f48ccc"/>
<circle cx="721.0" cy="592.0" r="0.75" fill="#f48ccc"/>
<circle cx="737.4" cy="591.3" r="0.75" fill="#f48ccc"/>
<circle cx="754.1" cy="592.0" r="0.75" fill="#f48ccc"/>
<circle cx="771.4" cy="592.0" r="0.75" fill="#f48ccc"/>
<circle cx="788.0" cy="592.0" r="0.75" fill="#f48ccc"/>
<circle cx="804.4" cy="592.0" r="0.75" fill="#f48ccc"/>
<circle cx="821.7" cy="592.0" r="0.75" fill="#f48ccc"/>
<circle cx="838.3" cy="592.0" r="0.75" fill="#f48ccc"/>
<circle cx="854.7" cy="592.0" r="0.75" fill="#f48ccc"/>
<circle cx="871.0" cy="592.0" r="0.75" fill="#f48ccc"/>
<circle cx="888.3" cy="592.0" r="0.75" fill="#f48ccc"/>
<circle cx="905.0" cy="592.0" r="0.75" fill="#f48ccc"/>
<circle cx="921.3" cy="592.0" r="0.75" fill="#f48ccc"/>
<path d="M669.2 598.3 L672.9 598.6 L688.0 598.6 L704.4 598.9 L721.0 598.6 L737.4 598.3 L754.1 598.6 L771.4 598.6 L788.0 598.6 L804.4 598.6 L821.7 598.6 L838.3 598.9 L854.7 598.9 L871.0 598.9 L888.3 598.6 L905.0 598.6 L921.3 598.3" fill="none" stroke="#30b658" stroke-width="1.3" stroke-linejoin="round" opacity="1"/>
<circle cx="669.2" cy="598.3" r="0.75" fill="#30b658"/>
<circle cx="672.9" cy="598.6" r="0.75" fill="#30b658"/>
<circle cx="688.0" cy="598.6" r="0.75" fill="#30b658"/>
<circle cx="704.4" cy="598.9" r="0.75" fill="#30b658"/>
<circle cx="721.0" cy="598.6" r="0.75" fill="#30b658"/>
<circle cx="737.4" cy="598.3" r="0.75" fill="#30b658"/>
<circle cx="754.1" cy="598.6" r="0.75" fill="#30b658"/>
<circle cx="771.4" cy="598.6" r="0.75" fill="#30b658"/>
<circle cx="788.0" cy="598.6" r="0.75" fill="#30b658"/>
<circle cx="804.4" cy="598.6" r="0.75" fill="#30b658"/>
<circle cx="821.7" cy="598.6" r="0.75" fill="#30b658"/>
<circle cx="838.3" cy="598.9" r="0.75" fill="#30b658"/>
<circle cx="854.7" cy="598.9" r="0.75" fill="#30b658"/>
<circle cx="871.0" cy="598.9" r="0.75" fill="#30b658"/>
<circle cx="888.3" cy="598.6" r="0.75" fill="#30b658"/>
<circle cx="905.0" cy="598.6" r="0.75" fill="#30b658"/>
<circle cx="921.3" cy="598.3" r="0.75" fill="#30b658"/>
<path d="M669.2 610.5 L672.9 613.7 L688.0 613.7 L704.4 613.7 L721.0 613.7 L737.4 613.4 L754.1 613.7 L771.4 613.0 L788.0 612.4 L804.4 613.7 L821.7 613.0 L838.3 614.0 L854.7 614.0 L871.0 614.0 L888.3 614.0 L905.0 614.0 L921.3 614.0" fill="none" stroke="#a8685e" stroke-width="0.9" stroke-linejoin="round" opacity="1"/>
<circle cx="669.2" cy="610.5" r="0.75" fill="#a8685e"/>
<circle cx="672.9" cy="613.7" r="0.75" fill="#a8685e"/>
<circle cx="688.0" cy="613.7" r="0.75" fill="#a8685e"/>
<circle cx="704.4" cy="613.7" r="0.75" fill="#a8685e"/>
<circle cx="721.0" cy="613.7" r="0.75" fill="#a8685e"/>
<circle cx="737.4" cy="613.4" r="0.75" fill="#a8685e"/>
<circle cx="754.1" cy="613.7" r="0.75" fill="#a8685e"/>
<circle cx="771.4" cy="613.0" r="0.75" fill="#a8685e"/>
<circle cx="788.0" cy="612.4" r="0.75" fill="#a8685e"/>
<circle cx="804.4" cy="613.7" r="0.75" fill="#a8685e"/>
<circle cx="821.7" cy="613.0" r="0.75" fill="#a8685e"/>
<circle cx="838.3" cy="614.0" r="0.75" fill="#a8685e"/>
<circle cx="854.7" cy="614.0" r="0.75" fill="#a8685e"/>
<circle cx="871.0" cy="614.0" r="0.75" fill="#a8685e"/>
<circle cx="888.3" cy="614.0" r="0.75" fill="#a8685e"/>
<circle cx="905.0" cy="614.0" r="0.75" fill="#a8685e"/>
<circle cx="921.3" cy="614.0" r="0.75" fill="#a8685e"/>
<text transform="translate(676 598) rotate(-90)" font-family="Liberation Sans, sans-serif" font-size="6.2" fill="#000" opacity="0.3">B / s</text>
</svg>
<div class="tl">
<div style="position:absolute;top:10.00px;line-height:14px;height:14px;white-space:pre;font-family:'Liberation Sans', sans-serif;font-size:9.4px;font-weight:normal;color:#33304a;letter-spacing:-0.100px;left:2px;">Overall</div>
<div style="position:absolute;top:432.00px;line-height:14px;height:14px;white-space:pre;font-family:'Liberation Sans', sans-serif;font-size:9.4px;font-weight:normal;color:#33304a;letter-spacing:0.094px;left:2px;">Storage</div>
<div style="position:absolute;top:69.90px;line-height:15px;height:15px;white-space:pre;font-family:'Liberation Sans', sans-serif;font-size:9.8px;font-weight:normal;color:#454545;letter-spacing:-0.009px;left:76.3px;">This dashboard provides real-time visibility into the</div>
<div style="position:absolute;top:69.90px;line-height:15px;height:15px;white-space:pre;font-family:'Liberation Sans', sans-serif;font-size:9.8px;font-weight:bold;color:#333;letter-spacing:-0.357px;left:298px;">Google Compute Engine</div>
<div style="position:absolute;top:69.90px;line-height:15px;height:15px;white-space:pre;font-family:'Liberation Sans', sans-serif;font-size:9.8px;font-weight:normal;color:#454545;letter-spacing:-0.005px;left:407.5px;">service. You can find information about the metrics in the</div>
<div style="position:absolute;top:69.90px;line-height:15px;height:15px;white-space:pre;font-family:'Liberation Sans', sans-serif;font-size:9.8px;font-weight:normal;color:#0a79b8;letter-spacing:-0.126px;left:655.5px;">Compute Engine Metrics</div>
<div style="position:absolute;top:69.90px;line-height:15px;height:15px;white-space:pre;font-family:'Liberation Sans', sans-serif;font-size:9.8px;font-weight:normal;color:#454545;letter-spacing:0.000px;left:763px;">documentation.</div>
<div style="position:absolute;top:141.70px;line-height:32px;height:32px;white-space:pre;font-family:'Liberation Sans', sans-serif;font-size:23.4px;font-weight:bold;color:#12a5e9;left:19.30000000000001px;width:600px;text-align:center;transform:scaleX(1.03);">4</div>
<div style="position:absolute;top:165.10px;line-height:11px;height:11px;white-space:pre;font-family:'Liberation Sans', sans-serif;font-size:7.2px;font-weight:bold;color:#12a5e9;letter-spacing:-0.066px;left:285.3px;">ACTIVE INSTANCES</div>
<div style="position:absolute;top:142.50px;line-height:32px;height:32px;white-space:pre;font-family:'Liberation Sans', sans-serif;font-size:23.1px;font-weight:normal;color:#0a0a0a;letter-spacing:0.800px;left:668px;width:600px;text-align:center;transform:scaleX(1.07);-webkit-text-stroke:0.35px #0a0a0a;">2.50</div>
<div style="position:absolute;top:165.60px;line-height:10px;height:10px;white-space:pre;font-family:'Liberation Sans', sans-serif;font-size:6.4px;font-weight:normal;color:#0b2a18;letter-spacing:0.368px;left:915.3px;">TOTAL RESERVED CPU CORES</div>
<div style="position:absolute;top:187.70px;line-height:14px;height:14px;white-space:pre;font-family:'Liberation Sans', sans-serif;font-size:9.3px;font-weight:normal;color:#444;letter-spacing:-0.065px;left:208.6px;">CPU UTILIZATION (P99)</div>
<div style="position:absolute;top:187.70px;line-height:14px;height:14px;white-space:pre;font-family:'Liberation Sans', sans-serif;font-size:9.3px;font-weight:normal;color:#444;letter-spacing:-0.162px;left:528.6px;">DISK READ BYTES (P99)</div>
<div style="position:absolute;top:187.70px;line-height:14px;height:14px;white-space:pre;font-family:'Liberation Sans', sans-serif;font-size:9.3px;font-weight:normal;color:#444;letter-spacing:-0.160px;left:847.6px;">DISK WRITE BYTES (P99)</div>
<div style="position:absolute;top:187.70px;line-height:14px;height:14px;white-space:pre;font-family:'Liberation Sans', sans-serif;font-size:9.3px;font-weight:normal;color:#444;letter-spacing:-0.533px;left:1219.6px;">STORAGE IOPS</div>
<div style="position:absolute;top:198.80px;line-height:9px;height:9px;white-space:pre;font-family:'Liberation Sans', sans-serif;font-size:5.3px;font-weight:normal;color:#555;letter-spacing:0.300px;right:1267.20px;text-align:right;">100</div>
<div style="position:absolute;top:215.80px;line-height:9px;height:9px;white-space:pre;font-family:'Liberation Sans', sans-serif;font-size:5.3px;font-weight:normal;color:#555;letter-spacing:0.300px;right:1267.20px;text-align:right;">80</div>
<div style="position:absolute;top:232.90px;line-height:9px;height:9px;white-space:pre;font-family:'Liberation Sans', sans-serif;font-size:5.3px;font-weight:normal;color:#555;letter-spacing:0.300px;right:1267.20px;text-align:right;">60</div>
<div style="position:absolute;top:251.10px;line-height:9px;height:9px;white-space:pre;font-family:'Liberation Sans', sans-serif;font-size:5.3px;font-weight:normal;color:#555;letter-spacing:0.300px;right:1267.20px;text-align:right;">40</div>
<div style="position:absolute;top:267.70px;line-height:9px;height:9px;white-space:pre;font-family:'Liberation Sans', sans-serif;font-size:5.3px;font-weight:normal;color:#555;letter-spacing:0.300px;right:1267.20px;text-align:right;">20</div>
<div style="position:absolute;top:286.00px;line-height:9px;height:9px;white-space:pre;font-family:'Liberation Sans', sans-serif;font-size:5.3px;font-weight:normal;color:#555;letter-spacing:0.300px;right:1267.20px;text-align:right;">0</div>
<div style="position:absolute;top:292.10px;line-height:8px;height:8px;white-space:pre;font-family:'Liberation Mono', monospace;font-size:4.8px;font-weight:normal;color:#606060;letter-spacing:0.120px;left:-209.5px;width:600px;text-align:center;">November</div>
<div style="position:absolute;top:292.10px;line-height:8px;height:8px;white-space:pre;font-family:'Liberation Mono', monospace;font-size:4.8px;font-weight:normal;color:#606060;letter-spacing:0.120px;left:-138px;width:600px;text-align:center;">December</div>
<div style="position:absolute;top:292.10px;line-height:8px;height:8px;white-space:pre;font-family:'Liberation Mono', monospace;font-size:4.8px;font-weight:normal;color:#606060;letter-spacing:0.120px;left:-64px;width:600px;text-align:center;">2018</div>
<div style="position:absolute;top:292.10px;line-height:8px;height:8px;white-space:pre;font-family:'Liberation Mono', monospace;font-size:4.8px;font-weight:normal;color:#606060;letter-spacing:0.120px;left:298px;">Februa</div>
<div style="position:absolute;top:198.60px;line-height:9px;height:9px;white-space:pre;font-family:'Liberation Sans', sans-serif;font-size:5.3px;font-weight:normal;color:#555;letter-spacing:0.300px;right:944.30px;text-align:right;">800</div>
<div style="position:absolute;top:220.10px;line-height:9px;height:9px;white-space:pre;font-family:'Liberation Sans', sans-serif;font-size:5.3px;font-weight:normal;color:#555;letter-spacing:0.300px;right:944.30px;text-align:right;">600</div>
<div style="position:absolute;top:241.80px;line-height:9px;height:9px;white-space:pre;font-family:'Liberation Sans', sans-serif;font-size:5.3px;font-weight:normal;color:#555;letter-spacing:0.300px;right:944.30px;text-align:right;">400</div>
<div style="position:absolute;top:263.50px;line-height:9px;height:9px;white-space:pre;font-family:'Liberation Sans', sans-serif;font-size:5.3px;font-weight:normal;color:#555;letter-spacing:0.300px;right:944.30px;text-align:right;">200</div>
<div style="position:absolute;top:286.00px;line-height:9px;height:9px;white-space:pre;font-family:'Liberation Sans', sans-serif;font-size:5.3px;font-weight:normal;color:#555;letter-spacing:0.300px;right:944.30px;text-align:right;">0</div>
<div style="position:absolute;top:292.10px;line-height:8px;height:8px;white-space:pre;font-family:'Liberation Mono', monospace;font-size:4.8px;font-weight:normal;color:#606060;letter-spacing:0.120px;left:113.5px;width:600px;text-align:center;">November</div>
<div style="position:absolute;top:292.10px;line-height:8px;height:8px;white-space:pre;font-family:'Liberation Mono', monospace;font-size:4.8px;font-weight:normal;color:#606060;letter-spacing:0.120px;left:185px;width:600px;text-align:center;">December</div>
<div style="position:absolute;top:292.10px;line-height:8px;height:8px;white-space:pre;font-family:'Liberation Mono', monospace;font-size:4.8px;font-weight:normal;color:#606060;letter-spacing:0.120px;left:259px;width:600px;text-align:center;">2018</div>
<div style="position:absolute;top:292.10px;line-height:8px;height:8px;white-space:pre;font-family:'Liberation Mono', monospace;font-size:4.8px;font-weight:normal;color:#606060;letter-spacing:0.120px;left:621px;">Februa</div>
<div style="position:absolute;top:207.50px;line-height:9px;height:9px;white-space:pre;font-family:'Liberation Sans', sans-serif;font-size:5.3px;font-weight:normal;color:#555;letter-spacing:0.300px;right:621.00px;text-align:right;">12k</div>
<div style="position:absolute;top:220.70px;line-height:9px;height:9px;white-space:pre;font-family:'Liberation Sans', sans-serif;font-size:5.3px;font-weight:normal;color:#555;letter-spacing:0.300px;right:621.00px;text-align:right;">10k</div>
<div style="position:absolute;top:233.70px;line-height:9px;height:9px;white-space:pre;font-family:'Liberation Sans', sans-serif;font-size:5.3px;font-weight:normal;color:#555;letter-spacing:0.300px;right:621.00px;text-align:right;">8k</div>
<div style="position:absolute;top:246.70px;line-height:9px;height:9px;white-space:pre;font-family:'Liberation Sans', sans-serif;font-size:5.3px;font-weight:normal;color:#555;letter-spacing:0.300px;right:621.00px;text-align:right;">6k</div>
<div style="position:absolute;top:259.70px;line-height:9px;height:9px;white-space:pre;font-family:'Liberation Sans', sans-serif;font-size:5.3px;font-weight:normal;color:#555;letter-spacing:0.300px;right:621.00px;text-align:right;">4k</div>
<div style="position:absolute;top:272.50px;line-height:9px;height:9px;white-space:pre;font-family:'Liberation Sans', sans-serif;font-size:5.3px;font-weight:normal;color:#555;letter-spacing:0.300px;right:621.00px;text-align:right;">2k</div>
<div style="position:absolute;top:286.00px;line-height:9px;height:9px;white-space:pre;font-family:'Liberation Sans', sans-serif;font-size:5.3px;font-weight:normal;color:#555;letter-spacing:0.300px;right:621.00px;text-align:right;">0</div>
<div style="position:absolute;top:292.10px;line-height:8px;height:8px;white-space:pre;font-family:'Liberation Mono', monospace;font-size:4.8px;font-weight:normal;color:#606060;letter-spacing:0.120px;left:436.70000000000005px;width:600px;text-align:center;">November</div>
<div style="position:absolute;top:292.10px;line-height:8px;height:8px;white-space:pre;font-family:'Liberation Mono', monospace;font-size:4.8px;font-weight:normal;color:#606060;letter-spacing:0.120px;left:508px;width:600px;text-align:center;">December</div>
<div style="position:absolute;top:292.10px;line-height:8px;height:8px;white-space:pre;font-family:'Liberation Mono', monospace;font-size:4.8px;font-weight:normal;color:#606060;letter-spacing:0.120px;left:582px;width:600px;text-align:center;">2018</div>
<div style="position:absolute;top:292.10px;line-height:8px;height:8px;white-space:pre;font-family:'Liberation Mono', monospace;font-size:4.8px;font-weight:normal;color:#606060;letter-spacing:0.120px;left:944px;">Februa</div>
<div style="position:absolute;top:206.70px;line-height:9px;height:9px;white-space:pre;font-family:'Liberation Sans', sans-serif;font-size:5.3px;font-weight:normal;color:#555;letter-spacing:0.300px;right:298.50px;text-align:right;">5</div>
<div style="position:absolute;top:222.20px;line-height:9px;height:9px;white-space:pre;font-family:'Liberation Sans', sans-serif;font-size:5.3px;font-weight:normal;color:#555;letter-spacing:0.300px;right:298.50px;text-align:right;">4</div>
<div style="position:absolute;top:237.50px;line-height:9px;height:9px;white-space:pre;font-family:'Liberation Sans', sans-serif;font-size:5.3px;font-weight:normal;color:#555;letter-spacing:0.300px;right:298.50px;text-align:right;">3</div>
<div style="position:absolute;top:253.70px;line-height:9px;height:9px;white-space:pre;font-family:'Liberation Sans', sans-serif;font-size:5.3px;font-weight:normal;color:#555;letter-spacing:0.300px;right:298.50px;text-align:right;">2</div>
<div style="position:absolute;top:269.70px;line-height:9px;height:9px;white-space:pre;font-family:'Liberation Sans', sans-serif;font-size:5.3px;font-weight:normal;color:#555;letter-spacing:0.300px;right:298.50px;text-align:right;">1</div>
<div style="position:absolute;top:286.00px;line-height:9px;height:9px;white-space:pre;font-family:'Liberation Sans', sans-serif;font-size:5.3px;font-weight:normal;color:#555;letter-spacing:0.300px;right:298.50px;text-align:right;">0</div>
<div style="position:absolute;top:292.10px;line-height:8px;height:8px;white-space:pre;font-family:'Liberation Mono', monospace;font-size:4.8px;font-weight:normal;color:#606060;letter-spacing:0.120px;left:760.5px;width:600px;text-align:center;">November</div>
<div style="position:absolute;top:292.10px;line-height:8px;height:8px;white-space:pre;font-family:'Liberation Mono', monospace;font-size:4.8px;font-weight:normal;color:#606060;letter-spacing:0.120px;left:833px;width:600px;text-align:center;">December</div>
<div style="position:absolute;top:292.10px;line-height:8px;height:8px;white-space:pre;font-family:'Liberation Mono', monospace;font-size:4.8px;font-weight:normal;color:#606060;letter-spacing:0.120px;left:908.5px;width:600px;text-align:center;">2018</div>
<div style="position:absolute;top:292.10px;line-height:8px;height:8px;white-space:pre;font-family:'Liberation Mono', monospace;font-size:4.8px;font-weight:normal;color:#606060;letter-spacing:0.120px;left:1272px;">Februa</div>
<div style="position:absolute;top:304.70px;line-height:14px;height:14px;white-space:pre;font-family:'Liberation Sans', sans-serif;font-size:9.3px;font-weight:normal;color:#444;letter-spacing:-0.105px;left:194.6px;">TOP 10 (CPU UTILIZATION)</div>
<div style="position:absolute;top:304.70px;line-height:14px;height:14px;white-space:pre;font-family:'Liberation Sans', sans-serif;font-size:9.3px;font-weight:normal;color:#444;letter-spacing:-0.042px;left:560.6px;">NETWORK (P99)</div>
<div style="position:absolute;top:304.70px;line-height:14px;height:14px;white-space:pre;font-family:'Liberation Sans', sans-serif;font-size:9.3px;font-weight:normal;color:#444;letter-spacing:-0.176px;left:810.1px;">TOP 10 MACHINES (NETWORK IN)</div>
<div style="position:absolute;top:304.70px;line-height:14px;height:14px;white-space:pre;font-family:'Liberation Sans', sans-serif;font-size:9.3px;font-weight:normal;color:#444;letter-spacing:-0.195px;left:1127.1px;">TOP 10 MACHINES (NETWORK OUT)</div>
<div style="position:absolute;top:315.00px;line-height:14px;height:14px;white-space:pre;font-family:'Liberation Sans', sans-serif;font-size:9px;font-weight:bold;color:#444;letter-spacing:-0.086px;left:2.5px;">Source</div>
<div style="position:absolute;top:315.30px;line-height:14px;height:14px;white-space:pre;font-family:'Liberation Sans', sans-serif;font-size:9px;font-weight:bold;color:#444;letter-spacing:0.021px;left:139.5px;">zone</div>
<div style="position:absolute;top:315.00px;line-height:14px;height:14px;white-space:pre;font-family:'Liberation Sans', sans-serif;font-size:9px;font-weight:bold;color:#444;letter-spacing:-0.103px;left:238.2px;">Value</div>
<div style="position:absolute;top:326.20px;line-height:14px;height:14px;white-space:pre;font-family:'Liberation Sans', sans-serif;font-size:9px;font-weight:normal;color:#555;letter-spacing:0.306px;left:11.7px;">gke-cluster-1-default-pool-</div>
<div style="position:absolute;top:335.00px;line-height:14px;height:14px;white-space:pre;font-family:'Liberation Sans', sans-serif;font-size:9px;font-weight:normal;color:#555;letter-spacing:0.241px;left:2.5px;">ee571973-bb5m</div>
<div style="position:absolute;top:330.80px;line-height:14px;height:14px;white-space:pre;font-family:'Liberation Sans', sans-serif;font-size:9px;font-weight:normal;color:#555;letter-spacing:0.075px;left:139.5px;">us-central1-a</div>
<div style="position:absolute;top:326.70px;line-height:14px;height:14px;white-space:pre;font-family:'Liberation Mono', monospace;font-size:8.9px;font-weight:normal;color:#444;letter-spacing:0.030px;right:982.40px;text-align:right;">0.09590107407407406</div>
<div style="position:absolute;top:326.70px;line-height:14px;height:14px;white-space:pre;font-family:'Liberation Sans', sans-serif;font-size:9px;font-weight:normal;color:#444;right:975.70px;text-align:right;">/</div>
<div style="position:absolute;top:336.00px;line-height:14px;height:14px;white-space:pre;font-family:'Liberation Sans', sans-serif;font-size:9px;font-weight:normal;color:#444;right:975.80px;text-align:right;">1</div>
<div style="position:absolute;top:345.20px;line-height:14px;height:14px;white-space:pre;font-family:'Liberation Sans', sans-serif;font-size:9px;font-weight:normal;color:#555;letter-spacing:0.306px;left:11.7px;">gke-cluster-1-default-pool-</div>
<div style="position:absolute;top:354.00px;line-height:14px;height:14px;white-space:pre;font-family:'Liberation Sans', sans-serif;font-size:9px;font-weight:normal;color:#555;letter-spacing:0.318px;left:2.5px;">ee571973-n1w2</div>
<div style="position:absolute;top:349.80px;line-height:14px;height:14px;white-space:pre;font-family:'Liberation Sans', sans-serif;font-size:9px;font-weight:normal;color:#555;letter-spacing:0.075px;left:139.5px;">us-central1-a</div>
<div style="position:absolute;top:345.70px;line-height:14px;height:14px;white-space:pre;font-family:'Liberation Mono', monospace;font-size:8.9px;font-weight:normal;color:#444;letter-spacing:0.030px;right:982.40px;text-align:right;">0.08185090012330458</div>
<div style="position:absolute;top:345.70px;line-height:14px;height:14px;white-space:pre;font-family:'Liberation Sans', sans-serif;font-size:9px;font-weight:normal;color:#444;right:975.70px;text-align:right;">/</div>
<div style="position:absolute;top:355.00px;line-height:14px;height:14px;white-space:pre;font-family:'Liberation Sans', sans-serif;font-size:9px;font-weight:normal;color:#444;right:975.80px;text-align:right;">1</div>
<div style="position:absolute;top:364.30px;line-height:14px;height:14px;white-space:pre;font-family:'Liberation Sans', sans-serif;font-size:9px;font-weight:normal;color:#555;letter-spacing:0.306px;left:11.7px;">gke-cluster-1-default-pool-</div>
<div style="position:absolute;top:373.00px;line-height:14px;height:14px;white-space:pre;font-family:'Liberation Sans', sans-serif;font-size:9px;font-weight:normal;color:#555;letter-spacing:0.472px;left:2.5px;">ee571973-vdb7</div>
<div style="position:absolute;top:368.90px;line-height:14px;height:14px;white-space:pre;font-family:'Liberation Sans', sans-serif;font-size:9px;font-weight:normal;color:#555;letter-spacing:0.075px;left:139.5px;">us-central1-a</div>
<div style="position:absolute;top:364.80px;line-height:14px;height:14px;white-space:pre;font-family:'Liberation Mono', monospace;font-size:8.9px;font-weight:normal;color:#444;letter-spacing:0.030px;right:982.40px;text-align:right;">0.07968004938271595</div>
<div style="position:absolute;top:364.80px;line-height:14px;height:14px;white-space:pre;font-family:'Liberation Sans', sans-serif;font-size:9px;font-weight:normal;color:#444;right:975.70px;text-align:right;">/</div>
<div style="position:absolute;top:374.00px;line-height:14px;height:14px;white-space:pre;font-family:'Liberation Sans', sans-serif;font-size:9px;font-weight:normal;color:#444;right:975.80px;text-align:right;">1</div>
<div style="position:absolute;top:388.00px;line-height:14px;height:14px;white-space:pre;font-family:'Liberation Sans', sans-serif;font-size:9px;font-weight:normal;color:#555;letter-spacing:0.047px;left:11.7px;">instance-1</div>
<div style="position:absolute;top:388.00px;line-height:14px;height:14px;white-space:pre;font-family:'Liberation Sans', sans-serif;font-size:9px;font-weight:normal;color:#555;letter-spacing:0.068px;left:139.5px;">us-west1-c</div>
<div style="position:absolute;top:383.50px;line-height:14px;height:14px;white-space:pre;font-family:'Liberation Mono', monospace;font-size:8.9px;font-weight:normal;color:#444;letter-spacing:0.030px;right:976.70px;text-align:right;">0.001599903086419751</div>
<div style="position:absolute;top:393.00px;line-height:14px;height:14px;white-space:pre;font-family:'Liberation Sans', sans-serif;font-size:8.9px;font-weight:normal;color:#444;right:975.50px;text-align:right;">/ 1</div>
<div style="position:absolute;top:315.00px;line-height:14px;height:14px;white-space:pre;font-family:'Liberation Sans', sans-serif;font-size:9px;font-weight:bold;color:#444;letter-spacing:-0.086px;left:648.5px;">Source</div>
<div style="position:absolute;top:315.30px;line-height:14px;height:14px;white-space:pre;font-family:'Liberation Sans', sans-serif;font-size:9px;font-weight:bold;color:#444;letter-spacing:0.021px;left:785.7px;">zone</div>
<div style="position:absolute;top:315.00px;line-height:14px;height:14px;white-space:pre;font-family:'Liberation Sans', sans-serif;font-size:9px;font-weight:bold;color:#444;letter-spacing:-0.063px;left:904px;">Value</div>
<div style="position:absolute;top:326.20px;line-height:14px;height:14px;white-space:pre;font-family:'Liberation Sans', sans-serif;font-size:9px;font-weight:normal;color:#555;letter-spacing:0.324px;left:657.7px;">gke-cluster-1-default-pool-</div>
<div style="position:absolute;top:334.80px;line-height:14px;height:14px;white-space:pre;font-family:'Liberation Sans', sans-serif;font-size:9px;font-weight:normal;color:#555;letter-spacing:0.072px;left:648.5px;">ee571973-n1w2</div>
<div style="position:absolute;top:330.40px;line-height:14px;height:14px;white-space:pre;font-family:'Liberation Sans', sans-serif;font-size:9px;font-weight:normal;color:#555;letter-spacing:0.082px;left:785.7px;">us-central1-a</div>
<div style="position:absolute;top:331.20px;line-height:14px;height:14px;white-space:pre;font-family:'Liberation Mono', monospace;font-size:8.9px;font-weight:normal;color:#444;right:330.30px;text-align:right;">12.193k<span style="font-family:'Liberation Sans',sans-serif"> B / s</span></div>
<div style="position:absolute;top:344.20px;line-height:14px;height:14px;white-space:pre;font-family:'Liberation Sans', sans-serif;font-size:9px;font-weight:normal;color:#555;letter-spacing:0.324px;left:657.7px;">gke-cluster-1-default-pool-</div>
<div style="position:absolute;top:353.00px;line-height:14px;height:14px;white-space:pre;font-family:'Liberation Sans', sans-serif;font-size:9px;font-weight:normal;color:#555;letter-spacing:0.226px;left:648.5px;">ee571973-vdb7</div>
<div style="position:absolute;top:348.40px;line-height:14px;height:14px;white-space:pre;font-family:'Liberation Sans', sans-serif;font-size:9px;font-weight:normal;color:#555;letter-spacing:0.082px;left:785.7px;">us-central1-a</div>
<div style="position:absolute;top:349.20px;line-height:14px;height:14px;white-space:pre;font-family:'Liberation Mono', monospace;font-size:8.9px;font-weight:normal;color:#444;right:330.30px;text-align:right;">5.782k<span style="font-family:'Liberation Sans',sans-serif"> B / s</span></div>
<div style="position:absolute;top:362.20px;line-height:14px;height:14px;white-space:pre;font-family:'Liberation Sans', sans-serif;font-size:9px;font-weight:normal;color:#555;letter-spacing:0.324px;left:657.7px;">gke-cluster-1-default-pool-</div>
<div style="position:absolute;top:371.00px;line-height:14px;height:14px;white-space:pre;font-family:'Liberation Sans', sans-serif;font-size:9px;font-weight:normal;color:#555;letter-spacing:-0.005px;left:648.5px;">ee571973-bb5m</div>
<div style="position:absolute;top:366.40px;line-height:14px;height:14px;white-space:pre;font-family:'Liberation Sans', sans-serif;font-size:9px;font-weight:normal;color:#555;letter-spacing:0.082px;left:785.7px;">us-central1-a</div>
<div style="position:absolute;top:367.20px;line-height:14px;height:14px;white-space:pre;font-family:'Liberation Mono', monospace;font-size:8.9px;font-weight:normal;color:#444;right:330.30px;text-align:right;">4.289k<span style="font-family:'Liberation Sans',sans-serif"> B / s</span></div>
<div style="position:absolute;top:380.00px;line-height:14px;height:14px;white-space:pre;font-family:'Liberation Sans', sans-serif;font-size:9px;font-weight:normal;color:#555;letter-spacing:0.047px;left:657.7px;">instance-1</div>
<div style="position:absolute;top:380.00px;line-height:14px;height:14px;white-space:pre;font-family:'Liberation Sans', sans-serif;font-size:9px;font-weight:normal;color:#555;letter-spacing:0.078px;left:785.7px;">us-west1-c</div>
<div style="position:absolute;top:381.00px;line-height:14px;height:14px;white-space:pre;font-family:'Liberation Mono', monospace;font-size:8.9px;font-weight:normal;color:#444;right:330.30px;text-align:right;">368.049 <span style="font-family:'Liberation Sans',sans-serif"> B / s</span></div>
<div style="position:absolute;top:315.00px;line-height:14px;height:14px;white-space:pre;font-family:'Liberation Sans', sans-serif;font-size:9px;font-weight:bold;color:#444;letter-spacing:-0.086px;left:971.5px;">Source</div>
<div style="position:absolute;top:315.30px;line-height:14px;height:14px;white-space:pre;font-family:'Liberation Sans', sans-serif;font-size:9px;font-weight:bold;color:#444;letter-spacing:0.021px;left:1110.5px;">zone</div>
<div style="position:absolute;top:315.00px;line-height:14px;height:14px;white-space:pre;font-family:'Liberation Sans', sans-serif;font-size:9px;font-weight:bold;color:#444;letter-spacing:-0.063px;left:1231.5px;">Value</div>
<div style="position:absolute;top:326.20px;line-height:14px;height:14px;white-space:pre;font-family:'Liberation Sans', sans-serif;font-size:9px;font-weight:normal;color:#555;letter-spacing:0.302px;left:981px;">gke-cluster-1-default-pool-</div>
<div style="position:absolute;top:334.80px;line-height:14px;height:14px;white-space:pre;font-family:'Liberation Sans', sans-serif;font-size:9px;font-weight:normal;color:#555;letter-spacing:0.088px;left:971.5px;">ee571973-n1w2</div>
<div style="position:absolute;top:330.40px;line-height:14px;height:14px;white-space:pre;font-family:'Liberation Sans', sans-serif;font-size:9px;font-weight:normal;color:#555;letter-spacing:0.090px;left:1110.5px;">us-central1-a</div>
<div style="position:absolute;top:331.20px;line-height:14px;height:14px;white-space:pre;font-family:'Liberation Mono', monospace;font-size:8.9px;font-weight:normal;color:#444;right:1.50px;text-align:right;">3.651k<span style="font-family:'Liberation Sans',sans-serif"> B / s</span></div>
<div style="position:absolute;top:344.20px;line-height:14px;height:14px;white-space:pre;font-family:'Liberation Sans', sans-serif;font-size:9px;font-weight:normal;color:#555;letter-spacing:0.302px;left:981px;">gke-cluster-1-default-pool-</div>
<div style="position:absolute;top:353.00px;line-height:14px;height:14px;white-space:pre;font-family:'Liberation Sans', sans-serif;font-size:9px;font-weight:normal;color:#555;letter-spacing:0.241px;left:971.5px;">ee571973-vdb7</div>
<div style="position:absolute;top:348.40px;line-height:14px;height:14px;white-space:pre;font-family:'Liberation Sans', sans-serif;font-size:9px;font-weight:normal;color:#555;letter-spacing:0.090px;left:1110.5px;">us-central1-a</div>
<div style="position:absolute;top:349.20px;line-height:14px;height:14px;white-space:pre;font-family:'Liberation Mono', monospace;font-size:8.9px;font-weight:normal;color:#444;right:1.50px;text-align:right;">1.318k<span style="font-family:'Liberation Sans',sans-serif"> B / s</span></div>
<div style="position:absolute;top:362.20px;line-height:14px;height:14px;white-space:pre;font-family:'Liberation Sans', sans-serif;font-size:9px;font-weight:normal;color:#555;letter-spacing:0.302px;left:981px;">gke-cluster-1-default-pool-</div>
<div style="position:absolute;top:371.00px;line-height:14px;height:14px;white-space:pre;font-family:'Liberation Sans', sans-serif;font-size:9px;font-weight:normal;color:#555;letter-spacing:0.011px;left:971.5px;">ee571973-bb5m</div>
<div style="position:absolute;top:366.40px;line-height:14px;height:14px;white-space:pre;font-family:'Liberation Sans', sans-serif;font-size:9px;font-weight:normal;color:#555;letter-spacing:0.090px;left:1110.5px;">us-central1-a</div>
<div style="position:absolute;top:367.20px;line-height:14px;height:14px;white-space:pre;font-family:'Liberation Mono', monospace;font-size:8.9px;font-weight:normal;color:#444;right:1.50px;text-align:right;">1.183k<span style="font-family:'Liberation Sans',sans-serif"> B / s</span></div>
<div style="position:absolute;top:380.00px;line-height:14px;height:14px;white-space:pre;font-family:'Liberation Sans', sans-serif;font-size:9px;font-weight:normal;color:#555;letter-spacing:0.047px;left:981px;">instance-1</div>
<div style="position:absolute;top:380.00px;line-height:14px;height:14px;white-space:pre;font-family:'Liberation Sans', sans-serif;font-size:9px;font-weight:normal;color:#555;letter-spacing:0.098px;left:1110.5px;">us-west1-c</div>
<div style="position:absolute;top:381.00px;line-height:14px;height:14px;white-space:pre;font-family:'Liberation Mono', monospace;font-size:8.9px;font-weight:normal;color:#444;right:1.50px;text-align:right;">5.656 <span style="font-family:'Liberation Sans',sans-serif"> B / s</span></div>
<div style="position:absolute;top:330.00px;line-height:9px;height:9px;white-space:pre;font-family:'Liberation Sans', sans-serif;font-size:5.3px;font-weight:normal;color:#555;letter-spacing:0.300px;right:944.00px;text-align:right;">10k</div>
<div style="position:absolute;top:408.80px;line-height:8px;height:8px;white-space:pre;font-family:'Liberation Mono', monospace;font-size:4.8px;font-weight:normal;color:#606060;letter-spacing:0.120px;left:113.5px;width:600px;text-align:center;">November</div>
<div style="position:absolute;top:408.80px;line-height:8px;height:8px;white-space:pre;font-family:'Liberation Mono', monospace;font-size:4.8px;font-weight:normal;color:#606060;letter-spacing:0.120px;left:185px;width:600px;text-align:center;">December</div>
<div style="position:absolute;top:408.80px;line-height:8px;height:8px;white-space:pre;font-family:'Liberation Mono', monospace;font-size:4.8px;font-weight:normal;color:#606060;letter-spacing:0.120px;left:258.79999999999995px;width:600px;text-align:center;">2018</div>
<div style="position:absolute;top:408.80px;line-height:8px;height:8px;white-space:pre;font-family:'Liberation Mono', monospace;font-size:4.8px;font-weight:normal;color:#606060;letter-spacing:0.120px;left:620.8px;">Februa</div>
<div style="position:absolute;top:452.70px;line-height:14px;height:14px;white-space:pre;font-family:'Liberation Sans', sans-serif;font-size:9.3px;font-weight:normal;color:#444;letter-spacing:-0.077px;left:175.9px;">VOLUME READ OPS/SEC (P99)</div>
<div style="position:absolute;top:452.70px;line-height:14px;height:14px;white-space:pre;font-family:'Liberation Sans', sans-serif;font-size:9.3px;font-weight:normal;color:#444;letter-spacing:0.022px;left:480.6px;">VOLUME READ OPS/S (percentiles)</div>
<div style="position:absolute;top:452.70px;line-height:14px;height:14px;white-space:pre;font-family:'Liberation Sans', sans-serif;font-size:9.3px;font-weight:normal;color:#444;letter-spacing:-0.132px;left:819.0px;">VOLUME WRITE OPS/SEC (P99)</div>
<div style="position:absolute;top:452.70px;line-height:14px;height:14px;white-space:pre;font-family:'Liberation Sans', sans-serif;font-size:9.3px;font-weight:normal;color:#444;letter-spacing:-0.051px;left:1128.3999999999999px;">VOLUME WRITE OPS/S (percentiles)</div>
<div style="position:absolute;top:478.70px;line-height:9px;height:9px;white-space:pre;font-family:'Liberation Sans', sans-serif;font-size:5.3px;font-weight:normal;color:#555;letter-spacing:0.300px;right:1267.20px;text-align:right;">.015</div>
<div style="position:absolute;top:502.50px;line-height:9px;height:9px;white-space:pre;font-family:'Liberation Sans', sans-serif;font-size:5.3px;font-weight:normal;color:#555;letter-spacing:0.300px;right:1267.20px;text-align:right;">.01</div>
<div style="position:absolute;top:526.50px;line-height:9px;height:9px;white-space:pre;font-family:'Liberation Sans', sans-serif;font-size:5.3px;font-weight:normal;color:#555;letter-spacing:0.300px;right:1267.20px;text-align:right;">.005</div>
<div style="position:absolute;top:551.00px;line-height:9px;height:9px;white-space:pre;font-family:'Liberation Sans', sans-serif;font-size:5.3px;font-weight:normal;color:#555;letter-spacing:0.300px;right:1267.20px;text-align:right;">0</div>
<div style="position:absolute;top:557.00px;line-height:8px;height:8px;white-space:pre;font-family:'Liberation Mono', monospace;font-size:4.8px;font-weight:normal;color:#606060;letter-spacing:0.120px;left:-209.5px;width:600px;text-align:center;">November</div>
<div style="position:absolute;top:557.00px;line-height:8px;height:8px;white-space:pre;font-family:'Liberation Mono', monospace;font-size:4.8px;font-weight:normal;color:#606060;letter-spacing:0.120px;left:-138px;width:600px;text-align:center;">December</div>
<div style="position:absolute;top:557.00px;line-height:8px;height:8px;white-space:pre;font-family:'Liberation Mono', monospace;font-size:4.8px;font-weight:normal;color:#606060;letter-spacing:0.120px;left:-64px;width:600px;text-align:center;">2018</div>
<div style="position:absolute;top:557.00px;line-height:8px;height:8px;white-space:pre;font-family:'Liberation Mono', monospace;font-size:4.8px;font-weight:normal;color:#606060;letter-spacing:0.120px;left:298px;">Februa</div>
<div style="position:absolute;top:505.50px;line-height:9px;height:9px;white-space:pre;font-family:'Liberation Sans', sans-serif;font-size:5.3px;font-weight:normal;color:#555;letter-spacing:0.300px;right:944.50px;text-align:right;">1</div>
<div style="position:absolute;top:557.00px;line-height:8px;height:8px;white-space:pre;font-family:'Liberation Mono', monospace;font-size:4.8px;font-weight:normal;color:#606060;letter-spacing:0.120px;left:113.5px;width:600px;text-align:center;">November</div>
<div style="position:absolute;top:557.00px;line-height:8px;height:8px;white-space:pre;font-family:'Liberation Mono', monospace;font-size:4.8px;font-weight:normal;color:#606060;letter-spacing:0.120px;left:185px;width:600px;text-align:center;">December</div>
<div style="position:absolute;top:557.00px;line-height:8px;height:8px;white-space:pre;font-family:'Liberation Mono', monospace;font-size:4.8px;font-weight:normal;color:#606060;letter-spacing:0.120px;left:258.5px;width:600px;text-align:center;">2018</div>
<div style="position:absolute;top:557.00px;line-height:8px;height:8px;white-space:pre;font-family:'Liberation Mono', monospace;font-size:4.8px;font-weight:normal;color:#606060;letter-spacing:0.120px;left:621.4px;">Februa</div>
<div style="position:absolute;top:452.70px;line-height:13px;height:13px;white-space:pre;font-family:'Liberation Sans', sans-serif;font-size:8.8px;font-weight:normal;color:#0b78be;letter-spacing:0.120px;left:400.6px;-webkit-text-stroke:0.25px #0b78be;">2h 6h 12h 1d 8d</div>
<div style="position:absolute;top:466.50px;line-height:9px;height:9px;white-space:pre;font-family:'Liberation Sans', sans-serif;font-size:5.3px;font-weight:normal;color:#555;letter-spacing:0.300px;right:621.00px;text-align:right;">2</div>
<div style="position:absolute;top:487.50px;line-height:9px;height:9px;white-space:pre;font-family:'Liberation Sans', sans-serif;font-size:5.3px;font-weight:normal;color:#555;letter-spacing:0.300px;right:621.00px;text-align:right;">1.5</div>
<div style="position:absolute;top:508.50px;line-height:9px;height:9px;white-space:pre;font-family:'Liberation Sans', sans-serif;font-size:5.3px;font-weight:normal;color:#555;letter-spacing:0.300px;right:621.00px;text-align:right;">1</div>
<div style="position:absolute;top:529.50px;line-height:9px;height:9px;white-space:pre;font-family:'Liberation Sans', sans-serif;font-size:5.3px;font-weight:normal;color:#555;letter-spacing:0.300px;right:621.00px;text-align:right;">.5</div>
<div style="position:absolute;top:551.00px;line-height:9px;height:9px;white-space:pre;font-family:'Liberation Sans', sans-serif;font-size:5.3px;font-weight:normal;color:#555;letter-spacing:0.300px;right:621.00px;text-align:right;">0</div>
<div style="position:absolute;top:557.00px;line-height:8px;height:8px;white-space:pre;font-family:'Liberation Mono', monospace;font-size:4.8px;font-weight:normal;color:#606060;letter-spacing:0.120px;left:436px;width:600px;text-align:center;">November</div>
<div style="position:absolute;top:557.00px;line-height:8px;height:8px;white-space:pre;font-family:'Liberation Mono', monospace;font-size:4.8px;font-weight:normal;color:#606060;letter-spacing:0.120px;left:508px;width:600px;text-align:center;">December</div>
<div style="position:absolute;top:557.00px;line-height:8px;height:8px;white-space:pre;font-family:'Liberation Mono', monospace;font-size:4.8px;font-weight:normal;color:#606060;letter-spacing:0.120px;left:582px;width:600px;text-align:center;">2018</div>
<div style="position:absolute;top:557.00px;line-height:8px;height:8px;white-space:pre;font-family:'Liberation Mono', monospace;font-size:4.8px;font-weight:normal;color:#606060;letter-spacing:0.120px;left:944px;">Februa</div>
<div style="position:absolute;top:469.20px;line-height:9px;height:9px;white-space:pre;font-family:'Liberation Sans', sans-serif;font-size:5.3px;font-weight:normal;color:#555;letter-spacing:0.300px;right:298.50px;text-align:right;">4</div>
<div style="position:absolute;top:481.90px;line-height:9px;height:9px;white-space:pre;font-family:'Liberation Sans', sans-serif;font-size:5.3px;font-weight:normal;color:#555;letter-spacing:0.300px;right:298.50px;text-align:right;">3</div>
<div style="position:absolute;top:499.10px;line-height:9px;height:9px;white-space:pre;font-family:'Liberation Sans', sans-serif;font-size:5.3px;font-weight:normal;color:#555;letter-spacing:0.300px;right:298.50px;text-align:right;">2</div>
<div style="position:absolute;top:530.10px;line-height:9px;height:9px;white-space:pre;font-family:'Liberation Sans', sans-serif;font-size:5.3px;font-weight:normal;color:#555;letter-spacing:0.300px;right:298.50px;text-align:right;">1</div>
<div style="position:absolute;top:557.00px;line-height:8px;height:8px;white-space:pre;font-family:'Liberation Mono', monospace;font-size:4.8px;font-weight:normal;color:#606060;letter-spacing:0.120px;left:760.3px;width:600px;text-align:center;">November</div>
<div style="position:absolute;top:557.00px;line-height:8px;height:8px;white-space:pre;font-family:'Liberation Mono', monospace;font-size:4.8px;font-weight:normal;color:#606060;letter-spacing:0.120px;left:833.3px;width:600px;text-align:center;">December</div>
<div style="position:absolute;top:557.00px;line-height:8px;height:8px;white-space:pre;font-family:'Liberation Mono', monospace;font-size:4.8px;font-weight:normal;color:#606060;letter-spacing:0.120px;left:908.7px;width:600px;text-align:center;">2018</div>
<div style="position:absolute;top:557.00px;line-height:8px;height:8px;white-space:pre;font-family:'Liberation Mono', monospace;font-size:4.8px;font-weight:normal;color:#606060;letter-spacing:0.120px;left:1272px;">Februa</div>
<div style="position:absolute;top:569.70px;line-height:14px;height:14px;white-space:pre;font-family:'Liberation Sans', sans-serif;font-size:9.3px;font-weight:normal;color:#444;letter-spacing:0.031px;left:146.6px;">VOLUME READ BYTES/S (percentiles)</div>
<div style="position:absolute;top:569.70px;line-height:14px;height:14px;white-space:pre;font-family:'Liberation Sans', sans-serif;font-size:9.3px;font-weight:normal;color:#444;letter-spacing:0.076px;left:460.20000000000005px;">TOP 10 VOLUMES (by disk read bytes/s)</div>
<div style="position:absolute;top:569.70px;line-height:14px;height:14px;white-space:pre;font-family:'Liberation Sans', sans-serif;font-size:9.3px;font-weight:normal;color:#444;letter-spacing:-0.026px;left:790.1px;">VOLUME WRITE BYTES/S (percentiles)</div>
<div style="position:absolute;top:569.70px;line-height:14px;height:14px;white-space:pre;font-family:'Liberation Sans', sans-serif;font-size:9.3px;font-weight:normal;color:#444;letter-spacing:0.071px;left:1108.8999999999999px;">TOP 10 VOLUMES (by disk write bytes/s)</div>
<div style="position:absolute;top:582.80px;line-height:9px;height:9px;white-space:pre;font-family:'Liberation Sans', sans-serif;font-size:5.3px;font-weight:normal;color:#555;letter-spacing:0.300px;right:1267.20px;text-align:right;">1k</div>
<div style="position:absolute;top:608.50px;line-height:9px;height:9px;white-space:pre;font-family:'Liberation Sans', sans-serif;font-size:5.3px;font-weight:normal;color:#555;letter-spacing:0.300px;right:1267.20px;text-align:right;">100</div>
<div style="position:absolute;top:585.30px;line-height:9px;height:9px;white-space:pre;font-family:'Liberation Sans', sans-serif;font-size:5.3px;font-weight:normal;color:#555;letter-spacing:0.300px;right:621.00px;text-align:right;">10k</div>
<div style="position:absolute;top:604.80px;line-height:9px;height:9px;white-space:pre;font-family:'Liberation Sans', sans-serif;font-size:5.3px;font-weight:normal;color:#555;letter-spacing:0.300px;right:621.00px;text-align:right;">1k</div>
<div style="position:absolute;top:592.00px;line-height:14px;height:14px;white-space:pre;font-family:'Liberation Sans', sans-serif;font-size:9px;font-weight:bold;color:#444;letter-spacing:-0.145px;left:332px;">Source:</div>
<div style="position:absolute;top:592.00px;line-height:14px;height:14px;white-space:pre;font-family:'Liberation Sans', sans-serif;font-size:9px;font-weight:normal;color:#555;letter-spacing:0.300px;left:367.6px;">gke-cluster-1-default-pool-ee571973-vdb7</div>
<div style="position:absolute;top:600.80px;line-height:14px;height:14px;white-space:pre;font-family:'Liberation Sans', sans-serif;font-size:9px;font-weight:bold;color:#444;letter-spacing:0.038px;left:323.6px;">device_name:</div>
<div style="position:absolute;top:600.80px;line-height:14px;height:14px;white-space:pre;font-family:'Liberation Sans', sans-serif;font-size:9px;font-weight:normal;color:#555;letter-spacing:0.290px;left:386.8px;">gke-cluster-1-default-pool-ee571973-vdb7</div>
<div style="position:absolute;top:609.60px;line-height:14px;height:14px;white-space:pre;font-family:'Liberation Sans', sans-serif;font-size:9px;font-weight:bold;color:#444;letter-spacing:-0.180px;left:323.6px;">zone:</div>
<div style="position:absolute;top:609.60px;line-height:14px;height:14px;white-space:pre;font-family:'Liberation Sans', sans-serif;font-size:9px;font-weight:normal;color:#555;letter-spacing:0.113px;left:349px;">us-central1-a</div>
<div style="position:absolute;top:592.00px;line-height:14px;height:14px;white-space:pre;font-family:'Liberation Sans', sans-serif;font-size:9px;font-weight:bold;color:#444;letter-spacing:-0.131px;left:978px;">Source:</div>
<div style="position:absolute;top:592.00px;line-height:14px;height:14px;white-space:pre;font-family:'Liberation Sans', sans-serif;font-size:9px;font-weight:normal;color:#555;letter-spacing:0.225px;left:1013.8px;">gke-cluster-1-default-pool-ee571973-n1w2</div>
<div style="position:absolute;top:600.80px;line-height:14px;height:14px;white-space:pre;font-family:'Liberation Sans', sans-serif;font-size:9px;font-weight:bold;color:#444;letter-spacing:0.071px;left:969.1px;">device_name:</div>
<div style="position:absolute;top:600.80px;line-height:14px;height:14px;white-space:pre;font-family:'Liberation Sans', sans-serif;font-size:9px;font-weight:normal;color:#555;letter-spacing:0.225px;left:1032.7px;">gke-cluster-1-default-pool-ee571973-n1w2</div>
<div style="position:absolute;top:609.60px;line-height:14px;height:14px;white-space:pre;font-family:'Liberation Sans', sans-serif;font-size:9px;font-weight:bold;color:#444;letter-spacing:-0.160px;left:969.1px;">zone:</div>
<div style="position:absolute;top:609.60px;line-height:14px;height:14px;white-space:pre;font-family:'Liberation Sans', sans-serif;font-size:9px;font-weight:normal;color:#555;letter-spacing:0.113px;left:995px;">us-central1-a</div>
</div>
<div style="position:absolute;left:1276.1px;top:511px;width:11.900000000000091px;height:15.799999999999955px;background:rgba(140,140,140,.88);"></div>
<div style="position:absolute;left:1275.4px;top:532.3px;width:12.599999999999909px;height:15.700000000000045px;background:rgba(140,140,140,.88);"></div>
<div style="position:absolute;left:1277px;top:552.9px;width:11px;height:17.800000000000068px;background:rgba(140,140,140,.88);"></div>
<svg width="1288" height="620" viewBox="0 0 1288 620"><circle cx="1283.6" cy="518.6" r="3" fill="none" stroke="#fff" stroke-width="1.3"/><path d="M1285.8 521 l2.6 2.6" stroke="#fff" stroke-width="1.4"/><path d="M1280.6 540.6 h8 M1284.2 537 v7.2" stroke="#fff" stroke-width="1.5"/><path d="M1285 558.5 l2.2 -1.8 l1.6 2 M1285.2 559 l3 3.4" stroke="#fff" stroke-width="1.2" fill="none"/></svg>
<div style="position:absolute;left:329.4px;top:336.6px;width:160.8px;height:111.59999999999997px;background:#2b2b2b;box-shadow:0 0 0 0.5px #1a1a1a;border-radius:2px;"></div>
<div style="position:absolute;left:329.9px;top:356.5px;width:159.8px;height:1px;background:#0c0c0c;"></div>
<div style="position:absolute;left:329.9px;top:357.4px;width:46.30000000000001px;height:90.30000000000001px;background:#232323;"></div>
<div style="position:absolute;left:375.8px;top:357.4px;width:1.0px;height:90.30000000000001px;background:#0c0c0c;"></div>
<div style="position:absolute;left:376.8px;top:357.4px;width:112.89999999999998px;height:9.0px;background:linear-gradient(90deg,#1f1f1f 0,#3b3b3b 8px);"></div>
<div style="position:absolute;left:475.7px;top:358.2px;width:7.5px;height:7.4px;background:#ff60c6;"></div>
<div style="position:absolute;left:376.8px;top:366.4px;width:112.89999999999998px;height:9.0px;background:linear-gradient(90deg,#1f1f1f 0,#252525 8px);"></div>
<div style="position:absolute;left:475.7px;top:367.2px;width:7.5px;height:7.4px;background:#8a8a8a;"></div>
<div style="position:absolute;left:376.8px;top:375.4px;width:112.89999999999998px;height:9.0px;background:linear-gradient(90deg,#1f1f1f 0,#3b3b3b 8px);"></div>
<div style="position:absolute;left:475.7px;top:376.2px;width:7.5px;height:7.4px;background:#c2c41c;"></div>
<div style="position:absolute;left:376.8px;top:384.4px;width:112.89999999999998px;height:9.0px;background:linear-gradient(90deg,#1f1f1f 0,#252525 8px);"></div>
<div style="position:absolute;left:475.7px;top:385.2px;width:7.5px;height:7.4px;background:#1cc6d6;"></div>
<div style="position:absolute;left:376.8px;top:393.4px;width:112.89999999999998px;height:9.0px;background:linear-gradient(90deg,#1f1f1f 0,#3b3b3b 8px);"></div>
<div style="position:absolute;left:475.7px;top:394.2px;width:7.5px;height:7.4px;background:#a45c52;"></div>
<div style="position:absolute;left:376.8px;top:402.4px;width:112.89999999999998px;height:9.0px;background:linear-gradient(90deg,#1f1f1f 0,#252525 8px);"></div>
<div style="position:absolute;left:475.7px;top:403.2px;width:7.5px;height:7.4px;background:#1c78c2;"></div>
<div style="position:absolute;left:376.8px;top:411.4px;width:112.89999999999998px;height:9.0px;background:linear-gradient(90deg,#1f1f1f 0,#3b3b3b 8px);"></div>
<div style="position:absolute;left:475.7px;top:412.2px;width:7.5px;height:7.4px;background:#ff7f10;"></div>
<div style="position:absolute;left:376.8px;top:420.4px;width:112.89999999999998px;height:9.0px;background:linear-gradient(90deg,#1f1f1f 0,#252525 8px);"></div>
<div style="position:absolute;left:475.7px;top:421.2px;width:7.5px;height:7.4px;background:#16a83a;"></div>
<div style="position:absolute;left:376.8px;top:429.4px;width:112.89999999999998px;height:9.0px;background:linear-gradient(90deg,#1f1f1f 0,#3b3b3b 8px);"></div>
<div style="position:absolute;left:475.7px;top:430.2px;width:7.5px;height:7.4px;background:#e41212;"></div>
<div style="position:absolute;left:376.8px;top:438.4px;width:112.89999999999998px;height:9.0px;background:linear-gradient(90deg,#1f1f1f 0,#252525 8px);"></div>
<div style="position:absolute;left:475.7px;top:439.2px;width:7.5px;height:7.4px;background:#a866d2;"></div>
<div class="tl">
<div style="position:absolute;top:334.80px;line-height:14px;height:14px;white-space:pre;font-family:'Liberation Sans', sans-serif;font-size:9px;font-weight:bold;color:#fff;letter-spacing:0.247px;left:332.5px;">Thu Jan 18 2018 07:47:49PM -0800</div>
<div style="position:absolute;top:354.30px;line-height:15px;height:15px;white-space:pre;font-family:'Liberation Sans', sans-serif;font-size:9.8px;font-weight:normal;color:#ff60c6;letter-spacing:0.100px;right:924.70px;text-align:right;">p90</div>
<div style="position:absolute;top:354.80px;line-height:14px;height:14px;white-space:pre;font-family:'Liberation Sans', sans-serif;font-size:9.6px;font-weight:normal;color:#fff;letter-spacing:-0.143px;left:394.5px;">1.001</div>
<div style="position:absolute;top:354.80px;line-height:14px;height:14px;white-space:pre;font-family:'Liberation Sans', sans-serif;font-size:9.6px;font-weight:normal;color:#fff;letter-spacing:0.203px;left:427.5px;">ops/sec</div>
<div style="position:absolute;top:363.30px;line-height:15px;height:15px;white-space:pre;font-family:'Liberation Sans', sans-serif;font-size:9.8px;font-weight:normal;color:#8a8a8a;letter-spacing:0.100px;right:924.70px;text-align:right;">p95</div>
<div style="position:absolute;top:363.80px;line-height:14px;height:14px;white-space:pre;font-family:'Liberation Sans', sans-serif;font-size:9.6px;font-weight:normal;color:#fff;letter-spacing:-0.143px;left:394.5px;">1.001</div>
<div style="position:absolute;top:363.80px;line-height:14px;height:14px;white-space:pre;font-family:'Liberation Sans', sans-serif;font-size:9.6px;font-weight:normal;color:#fff;letter-spacing:0.203px;left:427.5px;">ops/sec</div>
<div style="position:absolute;top:372.30px;line-height:15px;height:15px;white-space:pre;font-family:'Liberation Sans', sans-serif;font-size:9.8px;font-weight:normal;color:#c2c41c;letter-spacing:0.100px;right:924.70px;text-align:right;">p99</div>
<div style="position:absolute;top:372.80px;line-height:14px;height:14px;white-space:pre;font-family:'Liberation Sans', sans-serif;font-size:9.6px;font-weight:normal;color:#fff;letter-spacing:-0.143px;left:394.5px;">1.001</div>
<div style="position:absolute;top:372.80px;line-height:14px;height:14px;white-space:pre;font-family:'Liberation Sans', sans-serif;font-size:9.6px;font-weight:normal;color:#fff;letter-spacing:0.203px;left:427.5px;">ops/sec</div>
<div style="position:absolute;top:381.30px;line-height:15px;height:15px;white-space:pre;font-family:'Liberation Sans', sans-serif;font-size:9.8px;font-weight:normal;color:#1cc6d6;letter-spacing:0.100px;right:924.70px;text-align:right;">p99.9</div>
<div style="position:absolute;top:381.80px;line-height:14px;height:14px;white-space:pre;font-family:'Liberation Sans', sans-serif;font-size:9.6px;font-weight:normal;color:#fff;letter-spacing:-0.143px;left:394.5px;">1.001</div>
<div style="position:absolute;top:381.80px;line-height:14px;height:14px;white-space:pre;font-family:'Liberation Sans', sans-serif;font-size:9.6px;font-weight:normal;color:#fff;letter-spacing:0.203px;left:427.5px;">ops/sec</div>
<div style="position:absolute;top:390.30px;line-height:15px;height:15px;white-space:pre;font-family:'Liberation Sans', sans-serif;font-size:9.8px;font-weight:normal;color:#a45c52;letter-spacing:0.100px;right:924.70px;text-align:right;">p85</div>
<div style="position:absolute;top:390.80px;line-height:14px;height:14px;white-space:pre;font-family:'Liberation Sans', sans-serif;font-size:9.6px;font-weight:normal;color:#fff;letter-spacing:-0.143px;left:394.5px;">1.001</div>
<div style="position:absolute;top:390.80px;line-height:14px;height:14px;white-space:pre;font-family:'Liberation Sans', sans-serif;font-size:9.6px;font-weight:normal;color:#fff;letter-spacing:0.203px;left:427.5px;">ops/sec</div>
<div style="position:absolute;top:399.30px;line-height:15px;height:15px;white-space:pre;font-family:'Liberation Sans', sans-serif;font-size:9.8px;font-weight:normal;color:#1c78c2;letter-spacing:0.100px;right:924.70px;text-align:right;">mean</div>
<div style="position:absolute;top:399.80px;line-height:14px;height:14px;white-space:pre;font-family:'Liberation Sans', sans-serif;font-size:9.6px;font-weight:normal;color:#fff;letter-spacing:-0.143px;left:394.5px;">1.000</div>
<div style="position:absolute;top:399.80px;line-height:14px;height:14px;white-space:pre;font-family:'Liberation Sans', sans-serif;font-size:9.6px;font-weight:normal;color:#fff;letter-spacing:0.203px;left:427.5px;">ops/sec</div>
<div style="position:absolute;top:408.30px;line-height:15px;height:15px;white-space:pre;font-family:'Liberation Sans', sans-serif;font-size:9.8px;font-weight:normal;color:#ff7f10;letter-spacing:0.100px;right:924.70px;text-align:right;">p25</div>
<div style="position:absolute;top:408.80px;line-height:14px;height:14px;white-space:pre;font-family:'Liberation Sans', sans-serif;font-size:9.6px;font-weight:normal;color:#fff;letter-spacing:-0.143px;left:394.5px;">1.000</div>
<div style="position:absolute;top:408.80px;line-height:14px;height:14px;white-space:pre;font-family:'Liberation Sans', sans-serif;font-size:9.6px;font-weight:normal;color:#fff;letter-spacing:0.203px;left:427.5px;">ops/sec</div>
<div style="position:absolute;top:417.30px;line-height:15px;height:15px;white-space:pre;font-family:'Liberation Sans', sans-serif;font-size:9.8px;font-weight:normal;color:#16a83a;letter-spacing:0.100px;right:924.70px;text-align:right;">p5</div>
<div style="position:absolute;top:417.80px;line-height:14px;height:14px;white-space:pre;font-family:'Liberation Sans', sans-serif;font-size:9.6px;font-weight:normal;color:#fff;letter-spacing:-0.143px;left:394.5px;">1.000</div>
<div style="position:absolute;top:417.80px;line-height:14px;height:14px;white-space:pre;font-family:'Liberation Sans', sans-serif;font-size:9.6px;font-weight:normal;color:#fff;letter-spacing:0.203px;left:427.5px;">ops/sec</div>
<div style="position:absolute;top:426.30px;line-height:15px;height:15px;white-space:pre;font-family:'Liberation Sans', sans-serif;font-size:9.8px;font-weight:normal;color:#e41212;letter-spacing:0.100px;right:924.70px;text-align:right;">p50</div>
<div style="position:absolute;top:426.80px;line-height:14px;height:14px;white-space:pre;font-family:'Liberation Sans', sans-serif;font-size:9.6px;font-weight:normal;color:#fff;letter-spacing:-0.143px;left:394.5px;">1.000</div>
<div style="position:absolute;top:426.80px;line-height:14px;height:14px;white-space:pre;font-family:'Liberation Sans', sans-serif;font-size:9.6px;font-weight:normal;color:#fff;letter-spacing:0.203px;left:427.5px;">ops/sec</div>
<div style="position:absolute;top:435.30px;line-height:15px;height:15px;white-space:pre;font-family:'Liberation Sans', sans-serif;font-size:9.8px;font-weight:normal;color:#a866d2;letter-spacing:0.100px;right:924.70px;text-align:right;">p75</div>
<div style="position:absolute;top:435.80px;line-height:14px;height:14px;white-space:pre;font-family:'Liberation Sans', sans-serif;font-size:9.6px;font-weight:normal;color:#fff;letter-spacing:-0.143px;left:394.5px;">1.000</div>
<div style="position:absolute;top:435.80px;line-height:14px;height:14px;white-space:pre;font-family:'Liberation Sans', sans-serif;font-size:9.6px;font-weight:normal;color:#fff;letter-spacing:0.203px;left:427.5px;">ops/sec</div>
</div>
</div></body></html>
